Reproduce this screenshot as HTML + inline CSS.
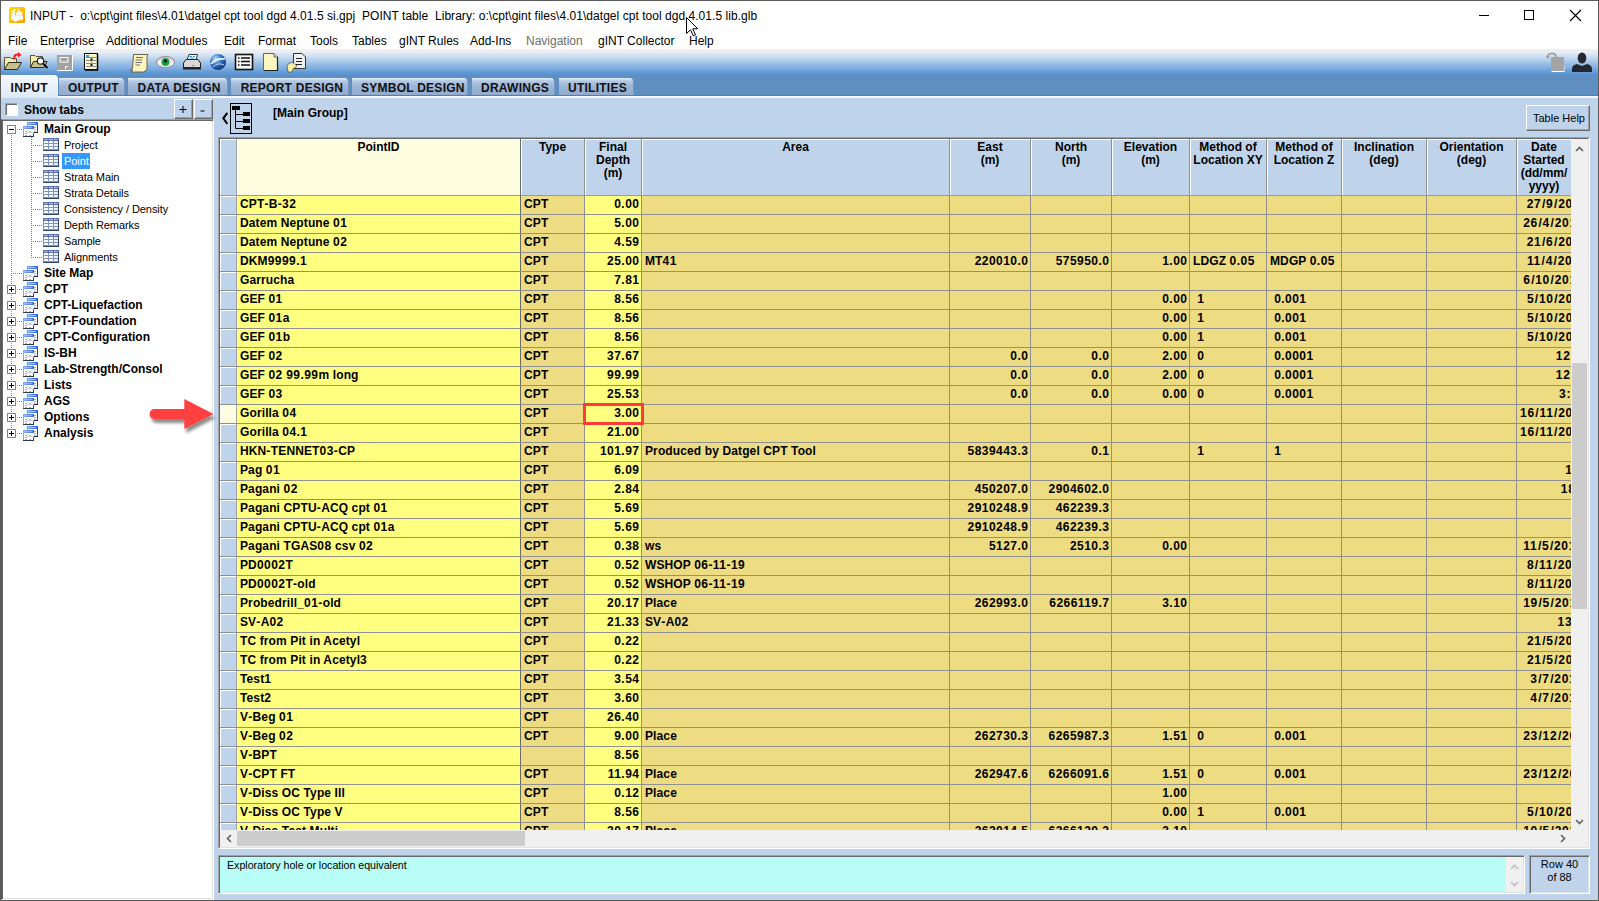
<!DOCTYPE html><html><head><meta charset="utf-8"><style>
*{box-sizing:border-box;margin:0;padding:0}
html,body{width:1599px;height:901px;overflow:hidden;background:#fff}
body{position:relative;font-family:"Liberation Sans",sans-serif;color:#000}
.ab{position:absolute}
.t{position:absolute;white-space:pre;line-height:1}
.b{font-weight:bold}
</style></head><body>
<div class="ab" style="left:0;top:0;width:1599px;height:901px;border:1px solid #5a5a5a;border-right-width:1px"></div>
<svg class="ab" style="left:9px;top:7px" width="17" height="17" viewBox="0 0 17 17">
<defs><linearGradient id="ig" x1="0" y1="0" x2="1" y2="1"><stop offset="0" stop-color="#ffe000"/><stop offset="1" stop-color="#ff9a00"/></linearGradient></defs>
<rect x="0" y="0" width="16" height="16" rx="1.5" fill="url(#ig)"/>
<path d="M2 8.5 H14 V12.5 L9 13.5 L6.5 15 L4.5 13.5 L2 12.5 Z" fill="#fff"/><rect x="2" y="4" width="3" height="1.5" fill="#fff"/><rect x="2" y="6.5" width="3" height="1.5" fill="#fff"/><path d="M4.5 2.2 H6.8 L6 4 V9 H4 V4 Z" fill="#fff" opacity="0.95"/><path d="M9.5 1.5 L10.8 3.5 V6 H8.8 V3.5 Z" fill="#fff" opacity="0.95"/><path d="M7 5.5 L13.5 4.5 V8.5 H7 Z" fill="#fff" opacity="0.85"/>
</svg>
<div class="t" style="left:30px;top:10px;font-size:12px;letter-spacing:.04px">INPUT -  o:\cpt\gint files\4.01\datgel cpt tool dgd 4.01.5 si.gpj  POINT table  Library: o:\cpt\gint files\4.01\datgel cpt tool dgd 4.01.5 lib.glb</div>
<div class="ab" style="left:1479px;top:15px;width:10px;height:1px;background:#000"></div>
<div class="ab" style="left:1524px;top:10px;width:10px;height:10px;border:1px solid #000"></div>
<svg class="ab" style="left:1569px;top:9px" width="13" height="13" viewBox="0 0 13 13"><path d="M1 1 L12 12 M12 1 L1 12" stroke="#000" stroke-width="1.1"/></svg>
<div class="t" style="left:8px;top:35px;font-size:12px;color:#000">File</div>
<div class="t" style="left:40px;top:35px;font-size:12px;color:#000">Enterprise</div>
<div class="t" style="left:106px;top:35px;font-size:12px;color:#000">Additional Modules</div>
<div class="t" style="left:224px;top:35px;font-size:12px;color:#000">Edit</div>
<div class="t" style="left:258px;top:35px;font-size:12px;color:#000">Format</div>
<div class="t" style="left:310px;top:35px;font-size:12px;color:#000">Tools</div>
<div class="t" style="left:352px;top:35px;font-size:12px;color:#000">Tables</div>
<div class="t" style="left:399px;top:35px;font-size:12px;color:#000">gINT Rules</div>
<div class="t" style="left:470px;top:35px;font-size:12px;color:#000">Add-Ins</div>
<div class="t" style="left:526px;top:35px;font-size:12px;color:#6d6d6d">Navigation</div>
<div class="t" style="left:598px;top:35px;font-size:12px;color:#000">gINT Collector</div>
<div class="t" style="left:689px;top:35px;font-size:12px;color:#000">Help</div>
<div class="ab" style="left:1px;top:49px;width:1597px;height:26px;background:linear-gradient(#efefef 0px,#efefef 2px,#eaf1fa 2px,#d0e0f2 7px,#a6c6e8 13px,#80afe0 19px,#5e97d4 24px,#5b93d0 26px)"></div>
<div class="ab" style="left:1px;top:75px;width:1597px;height:21px;background:#5f8ec0"></div>
<div class="ab" style="left:1px;top:95px;width:1597px;height:1px;background:#5d7aa0"></div>
<div class="ab" style="left:1px;top:96px;width:1597px;height:2px;background:#f4f8fc"></div>
<div class="ab" style="left:1px;top:75px;width:57px;height:23px;background:linear-gradient(#f8fbfe,#dde9f5);border-top-right-radius:4px"></div>
<div class="t b" style="left:10.6px;top:82px;font-size:12px;color:#111;letter-spacing:.25px">INPUT</div>
<div class="ab" style="left:59px;top:78px;width:66px;height:17px;background:linear-gradient(#e6eff9 0px,#b4c8e2 3px,#9eb6d6 8px,#92accf 17px);border-right:1px solid #7896bf;border-top-right-radius:4px"></div>
<div class="t b" style="left:68px;top:82px;font-size:12px;color:#111;letter-spacing:.25px">OUTPUT</div>
<div class="ab" style="left:128px;top:78px;width:100px;height:17px;background:linear-gradient(#e6eff9 0px,#b4c8e2 3px,#9eb6d6 8px,#92accf 17px);border-right:1px solid #7896bf;border-top-right-radius:4px"></div>
<div class="t b" style="left:137.5px;top:82px;font-size:12px;color:#111;letter-spacing:.25px">DATA DESIGN</div>
<div class="ab" style="left:231px;top:78px;width:118px;height:17px;background:linear-gradient(#e6eff9 0px,#b4c8e2 3px,#9eb6d6 8px,#92accf 17px);border-right:1px solid #7896bf;border-top-right-radius:4px"></div>
<div class="t b" style="left:240.7px;top:82px;font-size:12px;color:#111;letter-spacing:.25px">REPORT DESIGN</div>
<div class="ab" style="left:352px;top:78px;width:116px;height:17px;background:linear-gradient(#e6eff9 0px,#b4c8e2 3px,#9eb6d6 8px,#92accf 17px);border-right:1px solid #7896bf;border-top-right-radius:4px"></div>
<div class="t b" style="left:361px;top:82px;font-size:12px;color:#111;letter-spacing:.25px">SYMBOL DESIGN</div>
<div class="ab" style="left:472px;top:78px;width:83px;height:17px;background:linear-gradient(#e6eff9 0px,#b4c8e2 3px,#9eb6d6 8px,#92accf 17px);border-right:1px solid #7896bf;border-top-right-radius:4px"></div>
<div class="t b" style="left:481px;top:82px;font-size:12px;color:#111;letter-spacing:.25px">DRAWINGS</div>
<div class="ab" style="left:559px;top:78px;width:75px;height:17px;background:linear-gradient(#e6eff9 0px,#b4c8e2 3px,#9eb6d6 8px,#92accf 17px);border-right:1px solid #7896bf;border-top-right-radius:4px"></div>
<div class="t b" style="left:568px;top:82px;font-size:12px;color:#111;letter-spacing:.25px">UTILITIES</div>
<div class="ab" style="left:1px;top:98px;width:1597px;height:802px;background:#bfd4eb"></div>
<div class="ab" style="left:5px;top:103px;width:13px;height:13px;background:#fff;border-top:1px solid #a0a0a0;border-left:1px solid #a0a0a0;border-right:1px solid #fff;border-bottom:1px solid #fff;box-shadow:inset 1px 1px 0 #696969"></div>
<div class="t b" style="left:24px;top:104px;font-size:12px">Show tabs</div>
<div class="ab" style="left:174px;top:99px;width:19px;height:20px;background:#bfd4eb;border-top:1px solid #fff;border-left:1px solid #fff;border-right:1px solid #696969;border-bottom:1px solid #696969;box-shadow:inset -1px -1px 0 #a0a0a0"></div>
<div class="ab" style="left:194px;top:99px;width:19px;height:20px;background:#bfd4eb;border-top:1px solid #fff;border-left:1px solid #fff;border-right:1px solid #696969;border-bottom:1px solid #696969;box-shadow:inset -1px -1px 0 #a0a0a0"></div>
<svg class="ab" style="left:174px;top:99px" width="40" height="20"><path d="M5.5 10.5 H12.5 M9 7 V14" stroke="#000" stroke-width="1"/><path d="M26.5 12 H30.5" stroke="#000" stroke-width="1"/></svg>
<div class="ab" style="left:1px;top:119px;width:213px;height:781px;background:#fff;border-top:1px solid #a0a0a0;border-left:1px solid #555;border-right:1px solid #fff;border-bottom:1px solid #fff;box-shadow:inset 1px 1px 0 #696969,inset -1px -1px 0 #e3e3e3"></div>
<svg class="ab" style="left:0;top:49px" width="320" height="26" viewBox="0 49 320 26">
<!-- open folder -->
<path d="M4.5 57.5 H10 L11 58.5 H16.5 V69.5 H4.5 Z" fill="#f4eeb0" stroke="#5a5638" stroke-width="1"/>
<path d="M4.5 69.5 L8.5 62.5 H21.5 L17.5 69.5 Z" fill="#c8c08a" stroke="#2a2a20" stroke-width="1"/>
<path d="M14 59.5 C14 55 16 54 19 54.5" stroke="#ff1a1a" stroke-width="2" fill="none"/>
<path d="M18 52 L21.5 55 L18 57.5 Z" fill="#ff1a1a"/>
<!-- folder search -->
<path d="M30.5 55.5 H35 L36 56.5 H42.5 V67.5 H30.5 Z" fill="#f4eeb0" stroke="#5a5638" stroke-width="1"/>
<path d="M30.5 67.5 L33.5 61.5 H47 L44 67.5 Z" fill="#c8c08a" stroke="#2a2a20" stroke-width="1"/>
<circle cx="40.5" cy="61" r="3.2" fill="#fff" stroke="#222" stroke-width="1.2"/>
<path d="M43 63.5 L47.5 68" stroke="#111" stroke-width="1.8"/>
<!-- floppy -->
<rect x="57" y="55" width="15" height="15" fill="#a2a2a2"/>
<path d="M57 70.5 H72.5 V55" stroke="#fff" stroke-width="1" fill="none"/>
<rect x="60" y="57.5" width="8" height="4.5" fill="#a2a2a2" stroke="#fff" stroke-width="1"/>
<path d="M65.5 69 V66.5 H68" stroke="#fff" stroke-width="1" fill="none"/>
<!-- doc lines -->
<rect x="84.5" y="53.5" width="13" height="16" fill="#fffac8" stroke="#111" stroke-width="1"/>
<path d="M97.5 54 V70 H85" stroke="#000" stroke-width="1.5" fill="none"/>
<rect x="86" y="55" width="3" height="2" fill="#2aa0f0"/>
<path d="M86 57.5 H96 M86 60.5 H96 M86 63.5 H96 M86 66.5 H96" stroke="#8a8a8a" stroke-width="1"/>
<path d="M91.5 58 V67" stroke="#999" stroke-width="1"/>
<rect x="90.5" y="58.5" width="2" height="2" fill="#111"/><rect x="90.5" y="64" width="2" height="2" fill="#111"/>
<!-- scroll -->
<path d="M133.5 54.5 H148 L147 56 V69 L144 72 H131 L133 70 H130 L132.5 68.5 Z" fill="#fcf5c0" stroke="#6a6448" stroke-width="1"/>
<path d="M136 57.5 H143 M135.5 60 H142 M135.5 62.5 H142 M135.5 65 H140" stroke="#707070" stroke-width="1"/>
<!-- eye -->
<ellipse cx="165.5" cy="62" rx="9" ry="5.5" fill="#f4f4f4" stroke="#8a8a8a" stroke-width="1"/>
<path d="M157 61 Q165.5 54 174 61" stroke="#d8a0c8" stroke-width="1" fill="none"/>
<circle cx="165.5" cy="62" r="4" fill="#18a040"/>
<circle cx="165.5" cy="61" r="1.6" fill="#111"/>
<!-- printer -->
<path d="M187 60 L189 54.5 H197.5 L196 60 Z" fill="#fff" stroke="#333" stroke-width="1"/>
<path d="M189.5 56.5 H192 M193 56.5 H195 M190 58 H194" stroke="#1aa0ff" stroke-width="1"/>
<path d="M183.5 63 L186 59.5 H198 L200.5 63 V67.5 H183.5 Z" fill="#d8d8d8" stroke="#222" stroke-width="1"/>
<rect x="183" y="67" width="18" height="2.5" fill="#222"/>
<rect x="192" y="65" width="2" height="1" fill="#20d020"/>
<!-- globe -->
<defs><radialGradient id="gl" cx="0.35" cy="0.3" r="0.8"><stop offset="0" stop-color="#b8dcff"/><stop offset="0.5" stop-color="#2a70c0"/><stop offset="1" stop-color="#0a2a70"/></radialGradient></defs>
<circle cx="218" cy="62" r="8" fill="url(#gl)"/>
<path d="M211 64 Q216 58 225 59" stroke="#fff" stroke-width="1.6" fill="none" opacity="0.9"/>
<path d="M213 67 Q218 62 224 65" stroke="#e8f4ff" stroke-width="1" fill="none" opacity="0.8"/>
<!-- list box -->
<rect x="235.5" y="54.5" width="17" height="15" fill="#f8f8f8" stroke="#111" stroke-width="1.6"/>
<path d="M238 58 H239.5 M241 58 H250 M238 61.5 H239.5 M241 61.5 H250 M238 65 H239.5 M241 65 H250" stroke="#111" stroke-width="1.4"/>
<!-- blank page -->
<path d="M263.5 53.5 H274 L277.5 57 V70.5 H263.5 Z" fill="#fbf6c0" stroke="#666" stroke-width="1"/>
<path d="M274 53.5 V57 H277.5" fill="#ddd" stroke="#666" stroke-width="1"/>
<path d="M277.5 57 V70.5 H264" stroke="#222" stroke-width="1.2" fill="none"/>
<!-- hand doc -->
<path d="M293.5 53.5 H302 L305.5 57 V68.5 H293.5 Z" fill="#f0f0f0" stroke="#333" stroke-width="1"/>
<path d="M296 58.5 H302 M296 61.5 H302 M296 64.5 H302" stroke="#222" stroke-width="1"/>
<path d="M287 66 L289 63 L293 62.5 L297 66 L293 69 L292 72 H288 Z" fill="#f8f0a0" stroke="#555" stroke-width="0.8"/>
<!-- right icons -->
</svg>
<svg class="ab" style="left:1540px;top:49px" width="58" height="26" viewBox="1540 49 58 26">
<rect x="1551.5" y="66" width="13" height="6" fill="#fff"/>
<rect x="1551" y="57" width="13" height="14" fill="#a4a4a4"/>
<path d="M1547 58 Q1548 53 1553 53.5 Q1556 54 1556 57" stroke="#a4a4a4" stroke-width="1.8" fill="none"/>
<path d="M1546 56 L1548 59 L1550 56 Z" fill="#a4a4a4"/>
<ellipse cx="1582" cy="58" rx="4.3" ry="5.5" fill="#24282e"/>
<path d="M1572 72 V69 Q1572 65 1577 64 L1582 66 L1587 64 Q1592 65 1592 69 V72 Z" fill="#24282e"/>
</svg>
<svg width="0" height="0" style="position:absolute"><defs>
<symbol id="tbl" viewBox="0 0 16 13">
<rect x="0" y="0" width="16" height="13" fill="#8193c0"/>
<rect x="0" y="0" width="16" height="3" fill="#5c74b0"/>
<rect x="1.5" y="1" width="3" height="1" fill="#a8bce8"/><rect x="6" y="1" width="4" height="1" fill="#a8bce8"/><rect x="11" y="1" width="3" height="1" fill="#a8bce8"/>
<rect x="1" y="3" width="4" height="2" fill="#fff"/><rect x="6" y="3" width="4" height="2" fill="#fff"/><rect x="11" y="3" width="4" height="2" fill="#e8f0ff"/>
<rect x="1" y="6" width="4" height="2" fill="#fff"/><rect x="6" y="6" width="4" height="2" fill="#fff"/><rect x="11" y="6" width="4" height="2" fill="#e8f0ff"/>
<rect x="1" y="9" width="4" height="2" fill="#fff"/><rect x="6" y="9" width="4" height="2" fill="#fff"/><rect x="11" y="9" width="4" height="2" fill="#e8f0ff"/>
<rect x="0" y="12" width="16" height="1" fill="#34446c"/><rect x="15" y="2" width="1" height="11" fill="#34446c"/>
</symbol>
<symbol id="grp" viewBox="0 0 16 15">
<linearGradient id="tb" x1="0" y1="0" x2="1" y2="0"><stop offset="0" stop-color="#7aa6f4"/><stop offset="1" stop-color="#2c62dc"/></linearGradient>
<rect x="4" y="0" width="11" height="11" fill="#fff"/>
<rect x="4" y="0" width="11" height="3" fill="url(#tb)"/><rect x="5" y="1" width="8" height="1" fill="#a8c8fc" opacity="0.8"/>
<path d="M10 5.5 H13 M10 7.5 H13 M10 9.5 H13" stroke="#a4b0c8" stroke-width="1"/>
<rect x="4" y="3" width="1" height="8" fill="#8894b0"/><rect x="14" y="3" width="1" height="8" fill="#34446a"/><rect x="4" y="10" width="11" height="1" fill="#2a3858"/>
<rect x="0" y="4" width="11" height="11" fill="#fff" opacity="0.8"/>
<rect x="0" y="4" width="11" height="3" fill="url(#tb)" opacity="0.92"/><rect x="1" y="5" width="8" height="1" fill="#a8c8fc" opacity="0.7"/>
<path d="M2 9.5 H4 M6 9.5 H8 M2 11.5 H4 M2 13.5 H4 M6 13.5 H8" stroke="#a4b0c8" stroke-width="1"/>
<rect x="0" y="7" width="1" height="8" fill="#98a4bc"/><rect x="10" y="11" width="1" height="4" fill="#3c4c6c"/><rect x="0" y="14" width="11" height="1" fill="#2a3858"/>
</symbol>
</defs></svg>
<svg class="ab" style="left:0;top:0" width="214" height="460" viewBox="0 0 214 460"><rect x="11" y="135" width="1" height="1" fill="#808080"/><rect x="11" y="137" width="1" height="1" fill="#808080"/><rect x="11" y="139" width="1" height="1" fill="#808080"/><rect x="11" y="141" width="1" height="1" fill="#808080"/><rect x="11" y="143" width="1" height="1" fill="#808080"/><rect x="11" y="145" width="1" height="1" fill="#808080"/><rect x="11" y="147" width="1" height="1" fill="#808080"/><rect x="11" y="149" width="1" height="1" fill="#808080"/><rect x="11" y="151" width="1" height="1" fill="#808080"/><rect x="11" y="153" width="1" height="1" fill="#808080"/><rect x="11" y="155" width="1" height="1" fill="#808080"/><rect x="11" y="157" width="1" height="1" fill="#808080"/><rect x="11" y="159" width="1" height="1" fill="#808080"/><rect x="11" y="161" width="1" height="1" fill="#808080"/><rect x="11" y="163" width="1" height="1" fill="#808080"/><rect x="11" y="165" width="1" height="1" fill="#808080"/><rect x="11" y="167" width="1" height="1" fill="#808080"/><rect x="11" y="169" width="1" height="1" fill="#808080"/><rect x="11" y="171" width="1" height="1" fill="#808080"/><rect x="11" y="173" width="1" height="1" fill="#808080"/><rect x="11" y="175" width="1" height="1" fill="#808080"/><rect x="11" y="177" width="1" height="1" fill="#808080"/><rect x="11" y="179" width="1" height="1" fill="#808080"/><rect x="11" y="181" width="1" height="1" fill="#808080"/><rect x="11" y="183" width="1" height="1" fill="#808080"/><rect x="11" y="185" width="1" height="1" fill="#808080"/><rect x="11" y="187" width="1" height="1" fill="#808080"/><rect x="11" y="189" width="1" height="1" fill="#808080"/><rect x="11" y="191" width="1" height="1" fill="#808080"/><rect x="11" y="193" width="1" height="1" fill="#808080"/><rect x="11" y="195" width="1" height="1" fill="#808080"/><rect x="11" y="197" width="1" height="1" fill="#808080"/><rect x="11" y="199" width="1" height="1" fill="#808080"/><rect x="11" y="201" width="1" height="1" fill="#808080"/><rect x="11" y="203" width="1" height="1" fill="#808080"/><rect x="11" y="205" width="1" height="1" fill="#808080"/><rect x="11" y="207" width="1" height="1" fill="#808080"/><rect x="11" y="209" width="1" height="1" fill="#808080"/><rect x="11" y="211" width="1" height="1" fill="#808080"/><rect x="11" y="213" width="1" height="1" fill="#808080"/><rect x="11" y="215" width="1" height="1" fill="#808080"/><rect x="11" y="217" width="1" height="1" fill="#808080"/><rect x="11" y="219" width="1" height="1" fill="#808080"/><rect x="11" y="221" width="1" height="1" fill="#808080"/><rect x="11" y="223" width="1" height="1" fill="#808080"/><rect x="11" y="225" width="1" height="1" fill="#808080"/><rect x="11" y="227" width="1" height="1" fill="#808080"/><rect x="11" y="229" width="1" height="1" fill="#808080"/><rect x="11" y="231" width="1" height="1" fill="#808080"/><rect x="11" y="233" width="1" height="1" fill="#808080"/><rect x="11" y="235" width="1" height="1" fill="#808080"/><rect x="11" y="237" width="1" height="1" fill="#808080"/><rect x="11" y="239" width="1" height="1" fill="#808080"/><rect x="11" y="241" width="1" height="1" fill="#808080"/><rect x="11" y="243" width="1" height="1" fill="#808080"/><rect x="11" y="245" width="1" height="1" fill="#808080"/><rect x="11" y="247" width="1" height="1" fill="#808080"/><rect x="11" y="249" width="1" height="1" fill="#808080"/><rect x="11" y="251" width="1" height="1" fill="#808080"/><rect x="11" y="253" width="1" height="1" fill="#808080"/><rect x="11" y="255" width="1" height="1" fill="#808080"/><rect x="11" y="257" width="1" height="1" fill="#808080"/><rect x="11" y="259" width="1" height="1" fill="#808080"/><rect x="11" y="261" width="1" height="1" fill="#808080"/><rect x="11" y="263" width="1" height="1" fill="#808080"/><rect x="11" y="265" width="1" height="1" fill="#808080"/><rect x="11" y="267" width="1" height="1" fill="#808080"/><rect x="11" y="269" width="1" height="1" fill="#808080"/><rect x="11" y="271" width="1" height="1" fill="#808080"/><rect x="11" y="273" width="1" height="1" fill="#808080"/><rect x="11" y="275" width="1" height="1" fill="#808080"/><rect x="11" y="277" width="1" height="1" fill="#808080"/><rect x="11" y="279" width="1" height="1" fill="#808080"/><rect x="11" y="281" width="1" height="1" fill="#808080"/><rect x="11" y="283" width="1" height="1" fill="#808080"/><rect x="11" y="285" width="1" height="1" fill="#808080"/><rect x="11" y="287" width="1" height="1" fill="#808080"/><rect x="11" y="289" width="1" height="1" fill="#808080"/><rect x="11" y="291" width="1" height="1" fill="#808080"/><rect x="11" y="293" width="1" height="1" fill="#808080"/><rect x="11" y="295" width="1" height="1" fill="#808080"/><rect x="11" y="297" width="1" height="1" fill="#808080"/><rect x="11" y="299" width="1" height="1" fill="#808080"/><rect x="11" y="301" width="1" height="1" fill="#808080"/><rect x="11" y="303" width="1" height="1" fill="#808080"/><rect x="11" y="305" width="1" height="1" fill="#808080"/><rect x="11" y="307" width="1" height="1" fill="#808080"/><rect x="11" y="309" width="1" height="1" fill="#808080"/><rect x="11" y="311" width="1" height="1" fill="#808080"/><rect x="11" y="313" width="1" height="1" fill="#808080"/><rect x="11" y="315" width="1" height="1" fill="#808080"/><rect x="11" y="317" width="1" height="1" fill="#808080"/><rect x="11" y="319" width="1" height="1" fill="#808080"/><rect x="11" y="321" width="1" height="1" fill="#808080"/><rect x="11" y="323" width="1" height="1" fill="#808080"/><rect x="11" y="325" width="1" height="1" fill="#808080"/><rect x="11" y="327" width="1" height="1" fill="#808080"/><rect x="11" y="329" width="1" height="1" fill="#808080"/><rect x="11" y="331" width="1" height="1" fill="#808080"/><rect x="11" y="333" width="1" height="1" fill="#808080"/><rect x="11" y="335" width="1" height="1" fill="#808080"/><rect x="11" y="337" width="1" height="1" fill="#808080"/><rect x="11" y="339" width="1" height="1" fill="#808080"/><rect x="11" y="341" width="1" height="1" fill="#808080"/><rect x="11" y="343" width="1" height="1" fill="#808080"/><rect x="11" y="345" width="1" height="1" fill="#808080"/><rect x="11" y="347" width="1" height="1" fill="#808080"/><rect x="11" y="349" width="1" height="1" fill="#808080"/><rect x="11" y="351" width="1" height="1" fill="#808080"/><rect x="11" y="353" width="1" height="1" fill="#808080"/><rect x="11" y="355" width="1" height="1" fill="#808080"/><rect x="11" y="357" width="1" height="1" fill="#808080"/><rect x="11" y="359" width="1" height="1" fill="#808080"/><rect x="11" y="361" width="1" height="1" fill="#808080"/><rect x="11" y="363" width="1" height="1" fill="#808080"/><rect x="11" y="365" width="1" height="1" fill="#808080"/><rect x="11" y="367" width="1" height="1" fill="#808080"/><rect x="11" y="369" width="1" height="1" fill="#808080"/><rect x="11" y="371" width="1" height="1" fill="#808080"/><rect x="11" y="373" width="1" height="1" fill="#808080"/><rect x="11" y="375" width="1" height="1" fill="#808080"/><rect x="11" y="377" width="1" height="1" fill="#808080"/><rect x="11" y="379" width="1" height="1" fill="#808080"/><rect x="11" y="381" width="1" height="1" fill="#808080"/><rect x="11" y="383" width="1" height="1" fill="#808080"/><rect x="11" y="385" width="1" height="1" fill="#808080"/><rect x="11" y="387" width="1" height="1" fill="#808080"/><rect x="11" y="389" width="1" height="1" fill="#808080"/><rect x="11" y="391" width="1" height="1" fill="#808080"/><rect x="11" y="393" width="1" height="1" fill="#808080"/><rect x="11" y="395" width="1" height="1" fill="#808080"/><rect x="11" y="397" width="1" height="1" fill="#808080"/><rect x="11" y="399" width="1" height="1" fill="#808080"/><rect x="11" y="401" width="1" height="1" fill="#808080"/><rect x="11" y="403" width="1" height="1" fill="#808080"/><rect x="11" y="405" width="1" height="1" fill="#808080"/><rect x="11" y="407" width="1" height="1" fill="#808080"/><rect x="11" y="409" width="1" height="1" fill="#808080"/><rect x="11" y="411" width="1" height="1" fill="#808080"/><rect x="11" y="413" width="1" height="1" fill="#808080"/><rect x="11" y="415" width="1" height="1" fill="#808080"/><rect x="11" y="417" width="1" height="1" fill="#808080"/><rect x="11" y="419" width="1" height="1" fill="#808080"/><rect x="11" y="421" width="1" height="1" fill="#808080"/><rect x="11" y="423" width="1" height="1" fill="#808080"/><rect x="11" y="425" width="1" height="1" fill="#808080"/><rect x="11" y="427" width="1" height="1" fill="#808080"/><rect x="11" y="429" width="1" height="1" fill="#808080"/><rect x="11" y="431" width="1" height="1" fill="#808080"/><rect x="31" y="137" width="1" height="1" fill="#808080"/><rect x="31" y="139" width="1" height="1" fill="#808080"/><rect x="31" y="141" width="1" height="1" fill="#808080"/><rect x="31" y="143" width="1" height="1" fill="#808080"/><rect x="31" y="145" width="1" height="1" fill="#808080"/><rect x="31" y="147" width="1" height="1" fill="#808080"/><rect x="31" y="149" width="1" height="1" fill="#808080"/><rect x="31" y="151" width="1" height="1" fill="#808080"/><rect x="31" y="153" width="1" height="1" fill="#808080"/><rect x="31" y="155" width="1" height="1" fill="#808080"/><rect x="31" y="157" width="1" height="1" fill="#808080"/><rect x="31" y="159" width="1" height="1" fill="#808080"/><rect x="31" y="161" width="1" height="1" fill="#808080"/><rect x="31" y="163" width="1" height="1" fill="#808080"/><rect x="31" y="165" width="1" height="1" fill="#808080"/><rect x="31" y="167" width="1" height="1" fill="#808080"/><rect x="31" y="169" width="1" height="1" fill="#808080"/><rect x="31" y="171" width="1" height="1" fill="#808080"/><rect x="31" y="173" width="1" height="1" fill="#808080"/><rect x="31" y="175" width="1" height="1" fill="#808080"/><rect x="31" y="177" width="1" height="1" fill="#808080"/><rect x="31" y="179" width="1" height="1" fill="#808080"/><rect x="31" y="181" width="1" height="1" fill="#808080"/><rect x="31" y="183" width="1" height="1" fill="#808080"/><rect x="31" y="185" width="1" height="1" fill="#808080"/><rect x="31" y="187" width="1" height="1" fill="#808080"/><rect x="31" y="189" width="1" height="1" fill="#808080"/><rect x="31" y="191" width="1" height="1" fill="#808080"/><rect x="31" y="193" width="1" height="1" fill="#808080"/><rect x="31" y="195" width="1" height="1" fill="#808080"/><rect x="31" y="197" width="1" height="1" fill="#808080"/><rect x="31" y="199" width="1" height="1" fill="#808080"/><rect x="31" y="201" width="1" height="1" fill="#808080"/><rect x="31" y="203" width="1" height="1" fill="#808080"/><rect x="31" y="205" width="1" height="1" fill="#808080"/><rect x="31" y="207" width="1" height="1" fill="#808080"/><rect x="31" y="209" width="1" height="1" fill="#808080"/><rect x="31" y="211" width="1" height="1" fill="#808080"/><rect x="31" y="213" width="1" height="1" fill="#808080"/><rect x="31" y="215" width="1" height="1" fill="#808080"/><rect x="31" y="217" width="1" height="1" fill="#808080"/><rect x="31" y="219" width="1" height="1" fill="#808080"/><rect x="31" y="221" width="1" height="1" fill="#808080"/><rect x="31" y="223" width="1" height="1" fill="#808080"/><rect x="31" y="225" width="1" height="1" fill="#808080"/><rect x="31" y="227" width="1" height="1" fill="#808080"/><rect x="31" y="229" width="1" height="1" fill="#808080"/><rect x="31" y="231" width="1" height="1" fill="#808080"/><rect x="31" y="233" width="1" height="1" fill="#808080"/><rect x="31" y="235" width="1" height="1" fill="#808080"/><rect x="31" y="237" width="1" height="1" fill="#808080"/><rect x="31" y="239" width="1" height="1" fill="#808080"/><rect x="31" y="241" width="1" height="1" fill="#808080"/><rect x="31" y="243" width="1" height="1" fill="#808080"/><rect x="31" y="245" width="1" height="1" fill="#808080"/><rect x="31" y="247" width="1" height="1" fill="#808080"/><rect x="31" y="249" width="1" height="1" fill="#808080"/><rect x="31" y="251" width="1" height="1" fill="#808080"/><rect x="31" y="253" width="1" height="1" fill="#808080"/><rect x="31" y="255" width="1" height="1" fill="#808080"/><rect x="31" y="257" width="1" height="1" fill="#808080"/><rect x="7.5" y="125.5" width="8" height="8" fill="#fff" stroke="#848484" stroke-width="1"/><rect x="9" y="129" width="5" height="1" fill="#000"/><rect x="17" y="129" width="1" height="1" fill="#808080"/><rect x="19" y="129" width="1" height="1" fill="#808080"/><rect x="21" y="129" width="1" height="1" fill="#808080"/><use href="#grp" x="23" y="122" width="16" height="15"/><rect x="33" y="145" width="1" height="1" fill="#808080"/><rect x="35" y="145" width="1" height="1" fill="#808080"/><rect x="37" y="145" width="1" height="1" fill="#808080"/><rect x="39" y="145" width="1" height="1" fill="#808080"/><rect x="41" y="145" width="1" height="1" fill="#808080"/><use href="#tbl" x="43" y="138" width="16" height="13"/><rect x="33" y="161" width="1" height="1" fill="#808080"/><rect x="35" y="161" width="1" height="1" fill="#808080"/><rect x="37" y="161" width="1" height="1" fill="#808080"/><rect x="39" y="161" width="1" height="1" fill="#808080"/><rect x="41" y="161" width="1" height="1" fill="#808080"/><use href="#tbl" x="43" y="154" width="16" height="13"/><rect x="33" y="177" width="1" height="1" fill="#808080"/><rect x="35" y="177" width="1" height="1" fill="#808080"/><rect x="37" y="177" width="1" height="1" fill="#808080"/><rect x="39" y="177" width="1" height="1" fill="#808080"/><rect x="41" y="177" width="1" height="1" fill="#808080"/><use href="#tbl" x="43" y="170" width="16" height="13"/><rect x="33" y="193" width="1" height="1" fill="#808080"/><rect x="35" y="193" width="1" height="1" fill="#808080"/><rect x="37" y="193" width="1" height="1" fill="#808080"/><rect x="39" y="193" width="1" height="1" fill="#808080"/><rect x="41" y="193" width="1" height="1" fill="#808080"/><use href="#tbl" x="43" y="186" width="16" height="13"/><rect x="33" y="209" width="1" height="1" fill="#808080"/><rect x="35" y="209" width="1" height="1" fill="#808080"/><rect x="37" y="209" width="1" height="1" fill="#808080"/><rect x="39" y="209" width="1" height="1" fill="#808080"/><rect x="41" y="209" width="1" height="1" fill="#808080"/><use href="#tbl" x="43" y="202" width="16" height="13"/><rect x="33" y="225" width="1" height="1" fill="#808080"/><rect x="35" y="225" width="1" height="1" fill="#808080"/><rect x="37" y="225" width="1" height="1" fill="#808080"/><rect x="39" y="225" width="1" height="1" fill="#808080"/><rect x="41" y="225" width="1" height="1" fill="#808080"/><use href="#tbl" x="43" y="218" width="16" height="13"/><rect x="33" y="241" width="1" height="1" fill="#808080"/><rect x="35" y="241" width="1" height="1" fill="#808080"/><rect x="37" y="241" width="1" height="1" fill="#808080"/><rect x="39" y="241" width="1" height="1" fill="#808080"/><rect x="41" y="241" width="1" height="1" fill="#808080"/><use href="#tbl" x="43" y="234" width="16" height="13"/><rect x="33" y="257" width="1" height="1" fill="#808080"/><rect x="35" y="257" width="1" height="1" fill="#808080"/><rect x="37" y="257" width="1" height="1" fill="#808080"/><rect x="39" y="257" width="1" height="1" fill="#808080"/><rect x="41" y="257" width="1" height="1" fill="#808080"/><use href="#tbl" x="43" y="250" width="16" height="13"/><rect x="13" y="273" width="1" height="1" fill="#808080"/><rect x="15" y="273" width="1" height="1" fill="#808080"/><rect x="17" y="273" width="1" height="1" fill="#808080"/><rect x="19" y="273" width="1" height="1" fill="#808080"/><rect x="21" y="273" width="1" height="1" fill="#808080"/><use href="#grp" x="23" y="266" width="16" height="15"/><rect x="7.5" y="285.5" width="8" height="8" fill="#fff" stroke="#848484" stroke-width="1"/><rect x="9" y="289" width="5" height="1" fill="#000"/><rect x="11" y="287" width="1" height="5" fill="#000"/><rect x="17" y="289" width="1" height="1" fill="#808080"/><rect x="19" y="289" width="1" height="1" fill="#808080"/><rect x="21" y="289" width="1" height="1" fill="#808080"/><use href="#grp" x="23" y="282" width="16" height="15"/><rect x="7.5" y="301.5" width="8" height="8" fill="#fff" stroke="#848484" stroke-width="1"/><rect x="9" y="305" width="5" height="1" fill="#000"/><rect x="11" y="303" width="1" height="5" fill="#000"/><rect x="17" y="305" width="1" height="1" fill="#808080"/><rect x="19" y="305" width="1" height="1" fill="#808080"/><rect x="21" y="305" width="1" height="1" fill="#808080"/><use href="#grp" x="23" y="298" width="16" height="15"/><rect x="7.5" y="317.5" width="8" height="8" fill="#fff" stroke="#848484" stroke-width="1"/><rect x="9" y="321" width="5" height="1" fill="#000"/><rect x="11" y="319" width="1" height="5" fill="#000"/><rect x="17" y="321" width="1" height="1" fill="#808080"/><rect x="19" y="321" width="1" height="1" fill="#808080"/><rect x="21" y="321" width="1" height="1" fill="#808080"/><use href="#grp" x="23" y="314" width="16" height="15"/><rect x="7.5" y="333.5" width="8" height="8" fill="#fff" stroke="#848484" stroke-width="1"/><rect x="9" y="337" width="5" height="1" fill="#000"/><rect x="11" y="335" width="1" height="5" fill="#000"/><rect x="17" y="337" width="1" height="1" fill="#808080"/><rect x="19" y="337" width="1" height="1" fill="#808080"/><rect x="21" y="337" width="1" height="1" fill="#808080"/><use href="#grp" x="23" y="330" width="16" height="15"/><rect x="7.5" y="349.5" width="8" height="8" fill="#fff" stroke="#848484" stroke-width="1"/><rect x="9" y="353" width="5" height="1" fill="#000"/><rect x="11" y="351" width="1" height="5" fill="#000"/><rect x="17" y="353" width="1" height="1" fill="#808080"/><rect x="19" y="353" width="1" height="1" fill="#808080"/><rect x="21" y="353" width="1" height="1" fill="#808080"/><use href="#grp" x="23" y="346" width="16" height="15"/><rect x="7.5" y="365.5" width="8" height="8" fill="#fff" stroke="#848484" stroke-width="1"/><rect x="9" y="369" width="5" height="1" fill="#000"/><rect x="11" y="367" width="1" height="5" fill="#000"/><rect x="17" y="369" width="1" height="1" fill="#808080"/><rect x="19" y="369" width="1" height="1" fill="#808080"/><rect x="21" y="369" width="1" height="1" fill="#808080"/><use href="#grp" x="23" y="362" width="16" height="15"/><rect x="7.5" y="381.5" width="8" height="8" fill="#fff" stroke="#848484" stroke-width="1"/><rect x="9" y="385" width="5" height="1" fill="#000"/><rect x="11" y="383" width="1" height="5" fill="#000"/><rect x="17" y="385" width="1" height="1" fill="#808080"/><rect x="19" y="385" width="1" height="1" fill="#808080"/><rect x="21" y="385" width="1" height="1" fill="#808080"/><use href="#grp" x="23" y="378" width="16" height="15"/><rect x="7.5" y="397.5" width="8" height="8" fill="#fff" stroke="#848484" stroke-width="1"/><rect x="9" y="401" width="5" height="1" fill="#000"/><rect x="11" y="399" width="1" height="5" fill="#000"/><rect x="17" y="401" width="1" height="1" fill="#808080"/><rect x="19" y="401" width="1" height="1" fill="#808080"/><rect x="21" y="401" width="1" height="1" fill="#808080"/><use href="#grp" x="23" y="394" width="16" height="15"/><rect x="7.5" y="413.5" width="8" height="8" fill="#fff" stroke="#848484" stroke-width="1"/><rect x="9" y="417" width="5" height="1" fill="#000"/><rect x="11" y="415" width="1" height="5" fill="#000"/><rect x="17" y="417" width="1" height="1" fill="#808080"/><rect x="19" y="417" width="1" height="1" fill="#808080"/><rect x="21" y="417" width="1" height="1" fill="#808080"/><use href="#grp" x="23" y="410" width="16" height="15"/><rect x="7.5" y="429.5" width="8" height="8" fill="#fff" stroke="#848484" stroke-width="1"/><rect x="9" y="433" width="5" height="1" fill="#000"/><rect x="11" y="431" width="1" height="5" fill="#000"/><rect x="17" y="433" width="1" height="1" fill="#808080"/><rect x="19" y="433" width="1" height="1" fill="#808080"/><rect x="21" y="433" width="1" height="1" fill="#808080"/><use href="#grp" x="23" y="426" width="16" height="15"/></svg>
<div class="ab" style="left:62px;top:153px;width:28px;height:16px;background:#3399ff"></div>
<div class="t b" style="left:44px;top:123px;font-size:12px">Main Group</div>
<div class="t" style="left:64px;top:140px;font-size:11px;color:#000;letter-spacing:-.08px">Project</div>
<div class="t" style="left:64px;top:156px;font-size:11px;color:#fff;letter-spacing:-.08px">Point</div>
<div class="t" style="left:64px;top:172px;font-size:11px;color:#000;letter-spacing:-.08px">Strata Main</div>
<div class="t" style="left:64px;top:188px;font-size:11px;color:#000;letter-spacing:-.08px">Strata Details</div>
<div class="t" style="left:64px;top:204px;font-size:11px;color:#000;letter-spacing:-.08px">Consistency / Density</div>
<div class="t" style="left:64px;top:220px;font-size:11px;color:#000;letter-spacing:-.08px">Depth Remarks</div>
<div class="t" style="left:64px;top:236px;font-size:11px;color:#000;letter-spacing:-.08px">Sample</div>
<div class="t" style="left:64px;top:252px;font-size:11px;color:#000;letter-spacing:-.08px">Alignments</div>
<div class="t b" style="left:44px;top:267px;font-size:12px">Site Map</div>
<div class="t b" style="left:44px;top:283px;font-size:12px">CPT</div>
<div class="t b" style="left:44px;top:299px;font-size:12px">CPT-Liquefaction</div>
<div class="t b" style="left:44px;top:315px;font-size:12px">CPT-Foundation</div>
<div class="t b" style="left:44px;top:331px;font-size:12px">CPT-Configuration</div>
<div class="t b" style="left:44px;top:347px;font-size:12px">IS-BH</div>
<div class="t b" style="left:44px;top:363px;font-size:12px">Lab-Strength/Consol</div>
<div class="t b" style="left:44px;top:379px;font-size:12px">Lists</div>
<div class="t b" style="left:44px;top:395px;font-size:12px">AGS</div>
<div class="t b" style="left:44px;top:411px;font-size:12px">Options</div>
<div class="t b" style="left:44px;top:427px;font-size:12px">Analysis</div>
<svg class="ab" style="left:220px;top:102px" width="34" height="34" viewBox="220 102 34 34"><path d="M227.3 112.8 L223.3 118.3 L227.3 123.8" stroke="#000" stroke-width="2" fill="none"/><rect x="230.5" y="103.5" width="21" height="30" fill="none" stroke="#000" stroke-width="1"/><rect x="232" y="106" width="8" height="4" fill="#000"/><path d="M235.5 110 V128.5 H243 M235.5 114.5 H243 M235.5 121.5 H243" stroke="#000" stroke-width="1" fill="none"/><rect x="243" y="112" width="7" height="4" fill="#000"/><rect x="243" y="119" width="7" height="4" fill="#000"/><rect x="243" y="126" width="7" height="4" fill="#000"/></svg>
<div class="t b" style="left:273px;top:107px;font-size:12px">[Main Group]</div>
<div class="ab" style="left:1526px;top:105px;width:64px;height:26px;background:#bfd4eb;border-top:1px solid #fff;border-left:1px solid #fff;border-right:1px solid #696969;border-bottom:1px solid #696969;box-shadow:inset -1px -1px 0 #a0a0a0"></div>
<div class="t" style="left:1533px;top:113px;font-size:11px">Table Help</div>
<div class="ab" style="left:218px;top:137px;width:1372px;height:712px;border-top:1px solid #a0a0a0;border-left:1px solid #a0a0a0;border-right:1px solid #fff;border-bottom:1px solid #fff"></div>
<div class="ab" style="left:219px;top:138px;width:1370px;height:710px;border-top:1px solid #696969;border-left:1px solid #696969;border-right:1px solid #e3e3e3;border-bottom:1px solid #e3e3e3"></div>
<div class="ab" style="left:220px;top:139px;width:1351px;height:691px;overflow:hidden;background:#eddc82">
<div class="ab" style="left:0px;top:0px;width:16px;height:56px;background:#bfd4eb;border-top:1px solid #fff;border-left:1px solid #fff"></div>
<div class="ab" style="left:0px;top:56px;width:1400px;height:1px;background:#9a9aa2;"></div>
<div class="ab" style="left:17px;top:0px;width:283px;height:56px;background:#fffde0;border-top:1px solid #fff;border-left:1px solid #fff"></div>
<div class="t b" style="left:17px;top:2px;width:283px;text-align:center;font-size:12px;line-height:13px">PointID</div>
<div class="ab" style="left:301px;top:0px;width:63px;height:56px;background:#bfd4eb;border-top:1px solid #fff;border-left:1px solid #fff"></div>
<div class="t b" style="left:301px;top:2px;width:63px;text-align:center;font-size:12px;line-height:13px">Type</div>
<div class="ab" style="left:365px;top:0px;width:56px;height:56px;background:#bfd4eb;border-top:1px solid #fff;border-left:1px solid #fff"></div>
<div class="t b" style="left:365px;top:2px;width:56px;text-align:center;font-size:12px;line-height:13px">Final<br>Depth<br>(m)</div>
<div class="ab" style="left:422px;top:0px;width:307px;height:56px;background:#bfd4eb;border-top:1px solid #fff;border-left:1px solid #fff"></div>
<div class="t b" style="left:422px;top:2px;width:307px;text-align:center;font-size:12px;line-height:13px">Area</div>
<div class="ab" style="left:730px;top:0px;width:80px;height:56px;background:#bfd4eb;border-top:1px solid #fff;border-left:1px solid #fff"></div>
<div class="t b" style="left:730px;top:2px;width:80px;text-align:center;font-size:12px;line-height:13px">East<br>(m)</div>
<div class="ab" style="left:811px;top:0px;width:80px;height:56px;background:#bfd4eb;border-top:1px solid #fff;border-left:1px solid #fff"></div>
<div class="t b" style="left:811px;top:2px;width:80px;text-align:center;font-size:12px;line-height:13px">North<br>(m)</div>
<div class="ab" style="left:892px;top:0px;width:77px;height:56px;background:#bfd4eb;border-top:1px solid #fff;border-left:1px solid #fff"></div>
<div class="t b" style="left:892px;top:2px;width:77px;text-align:center;font-size:12px;line-height:13px">Elevation<br>(m)</div>
<div class="ab" style="left:970px;top:0px;width:76px;height:56px;background:#bfd4eb;border-top:1px solid #fff;border-left:1px solid #fff"></div>
<div class="t b" style="left:970px;top:2px;width:76px;text-align:center;font-size:12px;line-height:13px">Method of<br>Location XY</div>
<div class="ab" style="left:1047px;top:0px;width:74px;height:56px;background:#bfd4eb;border-top:1px solid #fff;border-left:1px solid #fff"></div>
<div class="t b" style="left:1047px;top:2px;width:74px;text-align:center;font-size:12px;line-height:13px">Method of<br>Location Z</div>
<div class="ab" style="left:1122px;top:0px;width:84px;height:56px;background:#bfd4eb;border-top:1px solid #fff;border-left:1px solid #fff"></div>
<div class="t b" style="left:1122px;top:2px;width:84px;text-align:center;font-size:12px;line-height:13px">Inclination<br>(deg)</div>
<div class="ab" style="left:1207px;top:0px;width:89px;height:56px;background:#bfd4eb;border-top:1px solid #fff;border-left:1px solid #fff"></div>
<div class="t b" style="left:1207px;top:2px;width:89px;text-align:center;font-size:12px;line-height:13px">Orientation<br>(deg)</div>
<div class="ab" style="left:1297px;top:0px;width:103px;height:56px;background:#bfd4eb;border-top:1px solid #fff;border-left:1px solid #fff"></div>
<div class="t b" style="left:1297px;top:2px;width:54px;text-align:center;font-size:12px;line-height:13px">Date<br>Started<br>(dd/mm/<br>yyyy)</div>
<div class="ab" style="left:16px;top:0px;width:1px;height:700px;background:#a0a0a8;"></div>
<div class="ab" style="left:300px;top:0px;width:1px;height:700px;background:#6a6a6a;"></div>
<div class="ab" style="left:364px;top:0px;width:1px;height:700px;background:#909090;"></div>
<div class="ab" style="left:421px;top:0px;width:1px;height:700px;background:#909090;"></div>
<div class="ab" style="left:729px;top:0px;width:1px;height:700px;background:#909090;"></div>
<div class="ab" style="left:810px;top:0px;width:1px;height:700px;background:#909090;"></div>
<div class="ab" style="left:891px;top:0px;width:1px;height:700px;background:#909090;"></div>
<div class="ab" style="left:969px;top:0px;width:1px;height:700px;background:#909090;"></div>
<div class="ab" style="left:1046px;top:0px;width:1px;height:700px;background:#909090;"></div>
<div class="ab" style="left:1121px;top:0px;width:1px;height:700px;background:#909090;"></div>
<div class="ab" style="left:1206px;top:0px;width:1px;height:700px;background:#909090;"></div>
<div class="ab" style="left:1296px;top:0px;width:1px;height:700px;background:#909090;"></div>
<div class="ab" style="left:17px;top:57px;width:283px;height:640px;background:#ffff80;"></div>
<div class="ab" style="left:365px;top:57px;width:56px;height:640px;background:#ffff80;"></div>
<div class="ab" style="left:0px;top:75px;width:1400px;height:1px;background:#909090;"></div>
<div class="ab" style="left:0px;top:57px;width:16px;height:18px;background:#bfd4eb;border-top:1px solid #fff;border-left:1px solid #fff"></div>
<div class="t b" style="left:20.0px;top:59px;font-size:12px;letter-spacing:.12px">CPT<span style="letter-spacing:.45px">-</span>B<span style="letter-spacing:.45px">-32</span></div>
<div class="t b" style="left:304.0px;top:59px;font-size:12px;letter-spacing:.12px">CPT</div>
<div class="t b" style="left:364px;top:59px;width:55.4px;text-align:right;font-size:12px;letter-spacing:.12px"><span style="letter-spacing:.45px">0.00</span></div>
<div class="t b" style="left:1306.7px;top:59px;font-size:12px;letter-spacing:.12px"><span style="letter-spacing:.7px">2</span><span style="letter-spacing:.7px">7</span><span style="padding:0 .6px">/</span><span style="letter-spacing:.7px">9</span><span style="padding:0 .6px">/</span><span style="letter-spacing:.7px">2</span><span style="letter-spacing:.7px">0</span><span style="letter-spacing:.7px">1</span><span style="letter-spacing:.7px">9</span></div>
<div class="ab" style="left:0px;top:94px;width:1400px;height:1px;background:#909090;"></div>
<div class="ab" style="left:0px;top:76px;width:16px;height:18px;background:#bfd4eb;border-top:1px solid #fff;border-left:1px solid #fff"></div>
<div class="t b" style="left:20.0px;top:78px;font-size:12px;letter-spacing:.12px">Datem Neptune <span style="letter-spacing:.45px">01</span></div>
<div class="t b" style="left:304.0px;top:78px;font-size:12px;letter-spacing:.12px">CPT</div>
<div class="t b" style="left:364px;top:78px;width:55.4px;text-align:right;font-size:12px;letter-spacing:.12px"><span style="letter-spacing:.45px">5.00</span></div>
<div class="t b" style="left:1303.2px;top:78px;font-size:12px;letter-spacing:.12px"><span style="letter-spacing:.7px">2</span><span style="letter-spacing:.7px">6</span><span style="padding:0 .6px">/</span><span style="letter-spacing:.7px">4</span><span style="padding:0 .6px">/</span><span style="letter-spacing:.7px">2</span><span style="letter-spacing:.7px">0</span><span style="letter-spacing:.7px">1</span><span style="letter-spacing:.7px">9</span></div>
<div class="ab" style="left:0px;top:113px;width:1400px;height:1px;background:#909090;"></div>
<div class="ab" style="left:0px;top:95px;width:16px;height:18px;background:#bfd4eb;border-top:1px solid #fff;border-left:1px solid #fff"></div>
<div class="t b" style="left:20.0px;top:97px;font-size:12px;letter-spacing:.12px">Datem Neptune <span style="letter-spacing:.45px">02</span></div>
<div class="t b" style="left:304.0px;top:97px;font-size:12px;letter-spacing:.12px">CPT</div>
<div class="t b" style="left:364px;top:97px;width:55.4px;text-align:right;font-size:12px;letter-spacing:.12px"><span style="letter-spacing:.45px">4.59</span></div>
<div class="t b" style="left:1306.7px;top:97px;font-size:12px;letter-spacing:.12px"><span style="letter-spacing:.7px">2</span><span style="letter-spacing:.7px">1</span><span style="padding:0 .6px">/</span><span style="letter-spacing:.7px">6</span><span style="padding:0 .6px">/</span><span style="letter-spacing:.7px">2</span><span style="letter-spacing:.7px">0</span><span style="letter-spacing:.7px">1</span><span style="letter-spacing:.7px">9</span></div>
<div class="ab" style="left:0px;top:132px;width:1400px;height:1px;background:#909090;"></div>
<div class="ab" style="left:0px;top:114px;width:16px;height:18px;background:#bfd4eb;border-top:1px solid #fff;border-left:1px solid #fff"></div>
<div class="t b" style="left:20.0px;top:116px;font-size:12px;letter-spacing:.12px">DKM<span style="letter-spacing:.45px">9999.1</span></div>
<div class="t b" style="left:304.0px;top:116px;font-size:12px;letter-spacing:.12px">CPT</div>
<div class="t b" style="left:364px;top:116px;width:55.4px;text-align:right;font-size:12px;letter-spacing:.12px"><span style="letter-spacing:.45px">25.00</span></div>
<div class="t b" style="left:425.0px;top:116px;font-size:12px;letter-spacing:.12px">MT<span style="letter-spacing:.45px">41</span></div>
<div class="t b" style="left:729px;top:116px;width:79.4px;text-align:right;font-size:12px;letter-spacing:.12px"><span style="letter-spacing:.45px">220010.0</span></div>
<div class="t b" style="left:810px;top:116px;width:79.4px;text-align:right;font-size:12px;letter-spacing:.12px"><span style="letter-spacing:.45px">575950.0</span></div>
<div class="t b" style="left:891px;top:116px;width:76.4px;text-align:right;font-size:12px;letter-spacing:.12px"><span style="letter-spacing:.45px">1.00</span></div>
<div class="t b" style="left:973.0px;top:116px;font-size:12px;letter-spacing:.12px">LDGZ <span style="letter-spacing:.45px">0.05</span></div>
<div class="t b" style="left:1050.0px;top:116px;font-size:12px;letter-spacing:.12px">MDGP <span style="letter-spacing:.45px">0.05</span></div>
<div class="t b" style="left:1306.9px;top:116px;font-size:12px;letter-spacing:.12px"><span style="letter-spacing:.7px">1</span><span style="letter-spacing:.7px">1</span><span style="padding:0 .6px">/</span><span style="letter-spacing:.7px">4</span><span style="padding:0 .6px">/</span><span style="letter-spacing:.7px">2</span><span style="letter-spacing:.7px">0</span><span style="letter-spacing:.7px">1</span><span style="letter-spacing:.7px">9</span></div>
<div class="ab" style="left:0px;top:151px;width:1400px;height:1px;background:#909090;"></div>
<div class="ab" style="left:0px;top:133px;width:16px;height:18px;background:#bfd4eb;border-top:1px solid #fff;border-left:1px solid #fff"></div>
<div class="t b" style="left:20.0px;top:135px;font-size:12px;letter-spacing:.12px">Garrucha</div>
<div class="t b" style="left:304.0px;top:135px;font-size:12px;letter-spacing:.12px">CPT</div>
<div class="t b" style="left:364px;top:135px;width:55.4px;text-align:right;font-size:12px;letter-spacing:.12px"><span style="letter-spacing:.45px">7.81</span></div>
<div class="t b" style="left:1303.2px;top:135px;font-size:12px;letter-spacing:.12px"><span style="letter-spacing:.7px">6</span><span style="padding:0 .6px">/</span><span style="letter-spacing:.7px">1</span><span style="letter-spacing:.7px">0</span><span style="padding:0 .6px">/</span><span style="letter-spacing:.7px">2</span><span style="letter-spacing:.7px">0</span><span style="letter-spacing:.7px">1</span><span style="letter-spacing:.7px">9</span></div>
<div class="ab" style="left:0px;top:170px;width:1400px;height:1px;background:#909090;"></div>
<div class="ab" style="left:0px;top:152px;width:16px;height:18px;background:#bfd4eb;border-top:1px solid #fff;border-left:1px solid #fff"></div>
<div class="t b" style="left:20.0px;top:154px;font-size:12px;letter-spacing:.12px">GEF <span style="letter-spacing:.45px">01</span></div>
<div class="t b" style="left:304.0px;top:154px;font-size:12px;letter-spacing:.12px">CPT</div>
<div class="t b" style="left:364px;top:154px;width:55.4px;text-align:right;font-size:12px;letter-spacing:.12px"><span style="letter-spacing:.45px">8.56</span></div>
<div class="t b" style="left:891px;top:154px;width:76.4px;text-align:right;font-size:12px;letter-spacing:.12px"><span style="letter-spacing:.45px">0.00</span></div>
<div class="t b" style="left:977.2px;top:154px;font-size:12px;letter-spacing:.12px"><span style="letter-spacing:.45px">1</span></div>
<div class="t b" style="left:1054.2px;top:154px;font-size:12px;letter-spacing:.12px"><span style="letter-spacing:.45px">0.001</span></div>
<div class="t b" style="left:1306.9px;top:154px;font-size:12px;letter-spacing:.12px"><span style="letter-spacing:.7px">5</span><span style="padding:0 .6px">/</span><span style="letter-spacing:.7px">1</span><span style="letter-spacing:.7px">0</span><span style="padding:0 .6px">/</span><span style="letter-spacing:.7px">2</span><span style="letter-spacing:.7px">0</span><span style="letter-spacing:.7px">1</span><span style="letter-spacing:.7px">9</span></div>
<div class="ab" style="left:0px;top:189px;width:1400px;height:1px;background:#909090;"></div>
<div class="ab" style="left:0px;top:171px;width:16px;height:18px;background:#bfd4eb;border-top:1px solid #fff;border-left:1px solid #fff"></div>
<div class="t b" style="left:20.0px;top:173px;font-size:12px;letter-spacing:.12px">GEF <span style="letter-spacing:.45px">01</span>a</div>
<div class="t b" style="left:304.0px;top:173px;font-size:12px;letter-spacing:.12px">CPT</div>
<div class="t b" style="left:364px;top:173px;width:55.4px;text-align:right;font-size:12px;letter-spacing:.12px"><span style="letter-spacing:.45px">8.56</span></div>
<div class="t b" style="left:891px;top:173px;width:76.4px;text-align:right;font-size:12px;letter-spacing:.12px"><span style="letter-spacing:.45px">0.00</span></div>
<div class="t b" style="left:977.2px;top:173px;font-size:12px;letter-spacing:.12px"><span style="letter-spacing:.45px">1</span></div>
<div class="t b" style="left:1054.2px;top:173px;font-size:12px;letter-spacing:.12px"><span style="letter-spacing:.45px">0.001</span></div>
<div class="t b" style="left:1306.9px;top:173px;font-size:12px;letter-spacing:.12px"><span style="letter-spacing:.7px">5</span><span style="padding:0 .6px">/</span><span style="letter-spacing:.7px">1</span><span style="letter-spacing:.7px">0</span><span style="padding:0 .6px">/</span><span style="letter-spacing:.7px">2</span><span style="letter-spacing:.7px">0</span><span style="letter-spacing:.7px">1</span><span style="letter-spacing:.7px">9</span></div>
<div class="ab" style="left:0px;top:208px;width:1400px;height:1px;background:#909090;"></div>
<div class="ab" style="left:0px;top:190px;width:16px;height:18px;background:#bfd4eb;border-top:1px solid #fff;border-left:1px solid #fff"></div>
<div class="t b" style="left:20.0px;top:192px;font-size:12px;letter-spacing:.12px">GEF <span style="letter-spacing:.45px">01</span>b</div>
<div class="t b" style="left:304.0px;top:192px;font-size:12px;letter-spacing:.12px">CPT</div>
<div class="t b" style="left:364px;top:192px;width:55.4px;text-align:right;font-size:12px;letter-spacing:.12px"><span style="letter-spacing:.45px">8.56</span></div>
<div class="t b" style="left:891px;top:192px;width:76.4px;text-align:right;font-size:12px;letter-spacing:.12px"><span style="letter-spacing:.45px">0.00</span></div>
<div class="t b" style="left:977.2px;top:192px;font-size:12px;letter-spacing:.12px"><span style="letter-spacing:.45px">1</span></div>
<div class="t b" style="left:1054.2px;top:192px;font-size:12px;letter-spacing:.12px"><span style="letter-spacing:.45px">0.001</span></div>
<div class="t b" style="left:1306.9px;top:192px;font-size:12px;letter-spacing:.12px"><span style="letter-spacing:.7px">5</span><span style="padding:0 .6px">/</span><span style="letter-spacing:.7px">1</span><span style="letter-spacing:.7px">0</span><span style="padding:0 .6px">/</span><span style="letter-spacing:.7px">2</span><span style="letter-spacing:.7px">0</span><span style="letter-spacing:.7px">1</span><span style="letter-spacing:.7px">9</span></div>
<div class="ab" style="left:0px;top:227px;width:1400px;height:1px;background:#909090;"></div>
<div class="ab" style="left:0px;top:209px;width:16px;height:18px;background:#bfd4eb;border-top:1px solid #fff;border-left:1px solid #fff"></div>
<div class="t b" style="left:20.0px;top:211px;font-size:12px;letter-spacing:.12px">GEF <span style="letter-spacing:.45px">02</span></div>
<div class="t b" style="left:304.0px;top:211px;font-size:12px;letter-spacing:.12px">CPT</div>
<div class="t b" style="left:364px;top:211px;width:55.4px;text-align:right;font-size:12px;letter-spacing:.12px"><span style="letter-spacing:.45px">37.67</span></div>
<div class="t b" style="left:729px;top:211px;width:79.4px;text-align:right;font-size:12px;letter-spacing:.12px"><span style="letter-spacing:.45px">0.0</span></div>
<div class="t b" style="left:810px;top:211px;width:79.4px;text-align:right;font-size:12px;letter-spacing:.12px"><span style="letter-spacing:.45px">0.0</span></div>
<div class="t b" style="left:891px;top:211px;width:76.4px;text-align:right;font-size:12px;letter-spacing:.12px"><span style="letter-spacing:.45px">2.00</span></div>
<div class="t b" style="left:977.2px;top:211px;font-size:12px;letter-spacing:.12px"><span style="letter-spacing:.45px">0</span></div>
<div class="t b" style="left:1054.2px;top:211px;font-size:12px;letter-spacing:.12px"><span style="letter-spacing:.45px">0.0001</span></div>
<div class="t b" style="left:1335.8px;top:211px;font-size:12px;letter-spacing:.12px"><span style="letter-spacing:.7px">1</span><span style="letter-spacing:.7px">2</span></div>
<div class="ab" style="left:0px;top:246px;width:1400px;height:1px;background:#909090;"></div>
<div class="ab" style="left:0px;top:228px;width:16px;height:18px;background:#bfd4eb;border-top:1px solid #fff;border-left:1px solid #fff"></div>
<div class="t b" style="left:20.0px;top:230px;font-size:12px;letter-spacing:.12px">GEF <span style="letter-spacing:.45px">02</span> <span style="letter-spacing:.45px">99.99</span>m long</div>
<div class="t b" style="left:304.0px;top:230px;font-size:12px;letter-spacing:.12px">CPT</div>
<div class="t b" style="left:364px;top:230px;width:55.4px;text-align:right;font-size:12px;letter-spacing:.12px"><span style="letter-spacing:.45px">99.99</span></div>
<div class="t b" style="left:729px;top:230px;width:79.4px;text-align:right;font-size:12px;letter-spacing:.12px"><span style="letter-spacing:.45px">0.0</span></div>
<div class="t b" style="left:810px;top:230px;width:79.4px;text-align:right;font-size:12px;letter-spacing:.12px"><span style="letter-spacing:.45px">0.0</span></div>
<div class="t b" style="left:891px;top:230px;width:76.4px;text-align:right;font-size:12px;letter-spacing:.12px"><span style="letter-spacing:.45px">2.00</span></div>
<div class="t b" style="left:977.2px;top:230px;font-size:12px;letter-spacing:.12px"><span style="letter-spacing:.45px">0</span></div>
<div class="t b" style="left:1054.2px;top:230px;font-size:12px;letter-spacing:.12px"><span style="letter-spacing:.45px">0.0001</span></div>
<div class="t b" style="left:1335.8px;top:230px;font-size:12px;letter-spacing:.12px"><span style="letter-spacing:.7px">1</span><span style="letter-spacing:.7px">2</span></div>
<div class="ab" style="left:0px;top:265px;width:1400px;height:1px;background:#909090;"></div>
<div class="ab" style="left:0px;top:247px;width:16px;height:18px;background:#bfd4eb;border-top:1px solid #fff;border-left:1px solid #fff"></div>
<div class="t b" style="left:20.0px;top:249px;font-size:12px;letter-spacing:.12px">GEF <span style="letter-spacing:.45px">03</span></div>
<div class="t b" style="left:304.0px;top:249px;font-size:12px;letter-spacing:.12px">CPT</div>
<div class="t b" style="left:364px;top:249px;width:55.4px;text-align:right;font-size:12px;letter-spacing:.12px"><span style="letter-spacing:.45px">25.53</span></div>
<div class="t b" style="left:729px;top:249px;width:79.4px;text-align:right;font-size:12px;letter-spacing:.12px"><span style="letter-spacing:.45px">0.0</span></div>
<div class="t b" style="left:810px;top:249px;width:79.4px;text-align:right;font-size:12px;letter-spacing:.12px"><span style="letter-spacing:.45px">0.0</span></div>
<div class="t b" style="left:891px;top:249px;width:76.4px;text-align:right;font-size:12px;letter-spacing:.12px"><span style="letter-spacing:.45px">0.00</span></div>
<div class="t b" style="left:977.2px;top:249px;font-size:12px;letter-spacing:.12px"><span style="letter-spacing:.45px">0</span></div>
<div class="t b" style="left:1054.2px;top:249px;font-size:12px;letter-spacing:.12px"><span style="letter-spacing:.45px">0.0001</span></div>
<div class="t b" style="left:1339.0px;top:249px;font-size:12px;letter-spacing:.12px"><span style="letter-spacing:.7px">3</span><span style="letter-spacing:.7px">:</span><span style="letter-spacing:.7px">0</span><span style="letter-spacing:.7px">0</span></div>
<div class="ab" style="left:0px;top:284px;width:1400px;height:1px;background:#909090;"></div>
<div class="ab" style="left:0px;top:266px;width:16px;height:18px;background:#fffde0;border-top:1px solid #fff;border-left:1px solid #fff"></div>
<div class="t b" style="left:20.0px;top:268px;font-size:12px;letter-spacing:.12px">Gorilla <span style="letter-spacing:.45px">04</span></div>
<div class="t b" style="left:304.0px;top:268px;font-size:12px;letter-spacing:.12px">CPT</div>
<div class="t b" style="left:364px;top:268px;width:55.4px;text-align:right;font-size:12px;letter-spacing:.12px"><span style="letter-spacing:.45px">3.00</span></div>
<div class="t b" style="left:1300.0px;top:268px;font-size:12px;letter-spacing:.12px"><span style="letter-spacing:.7px">1</span><span style="letter-spacing:.7px">6</span><span style="padding:0 .6px">/</span><span style="letter-spacing:.7px">1</span><span style="letter-spacing:.7px">1</span><span style="padding:0 .6px">/</span><span style="letter-spacing:.7px">2</span><span style="letter-spacing:.7px">0</span><span style="letter-spacing:.7px">1</span><span style="letter-spacing:.7px">9</span></div>
<div class="ab" style="left:0px;top:303px;width:1400px;height:1px;background:#909090;"></div>
<div class="ab" style="left:0px;top:285px;width:16px;height:18px;background:#bfd4eb;border-top:1px solid #fff;border-left:1px solid #fff"></div>
<div class="t b" style="left:20.0px;top:287px;font-size:12px;letter-spacing:.12px">Gorilla <span style="letter-spacing:.45px">04.1</span></div>
<div class="t b" style="left:304.0px;top:287px;font-size:12px;letter-spacing:.12px">CPT</div>
<div class="t b" style="left:364px;top:287px;width:55.4px;text-align:right;font-size:12px;letter-spacing:.12px"><span style="letter-spacing:.45px">21.00</span></div>
<div class="t b" style="left:1300.0px;top:287px;font-size:12px;letter-spacing:.12px"><span style="letter-spacing:.7px">1</span><span style="letter-spacing:.7px">6</span><span style="padding:0 .6px">/</span><span style="letter-spacing:.7px">1</span><span style="letter-spacing:.7px">1</span><span style="padding:0 .6px">/</span><span style="letter-spacing:.7px">2</span><span style="letter-spacing:.7px">0</span><span style="letter-spacing:.7px">1</span><span style="letter-spacing:.7px">9</span></div>
<div class="ab" style="left:0px;top:322px;width:1400px;height:1px;background:#909090;"></div>
<div class="ab" style="left:0px;top:304px;width:16px;height:18px;background:#bfd4eb;border-top:1px solid #fff;border-left:1px solid #fff"></div>
<div class="t b" style="left:20.0px;top:306px;font-size:12px;letter-spacing:.12px">HKN<span style="letter-spacing:.45px">-</span>TENNET<span style="letter-spacing:.45px">03-</span>CP</div>
<div class="t b" style="left:304.0px;top:306px;font-size:12px;letter-spacing:.12px">CPT</div>
<div class="t b" style="left:364px;top:306px;width:55.4px;text-align:right;font-size:12px;letter-spacing:.12px"><span style="letter-spacing:.45px">101.97</span></div>
<div class="t b" style="left:425.0px;top:306px;font-size:12px;letter-spacing:.12px">Produced by Datgel CPT Tool</div>
<div class="t b" style="left:729px;top:306px;width:79.4px;text-align:right;font-size:12px;letter-spacing:.12px"><span style="letter-spacing:.45px">5839443.3</span></div>
<div class="t b" style="left:810px;top:306px;width:79.4px;text-align:right;font-size:12px;letter-spacing:.12px"><span style="letter-spacing:.45px">0.1</span></div>
<div class="t b" style="left:977.2px;top:306px;font-size:12px;letter-spacing:.12px"><span style="letter-spacing:.45px">1</span></div>
<div class="t b" style="left:1054.2px;top:306px;font-size:12px;letter-spacing:.12px"><span style="letter-spacing:.45px">1</span></div>
<div class="ab" style="left:0px;top:341px;width:1400px;height:1px;background:#909090;"></div>
<div class="ab" style="left:0px;top:323px;width:16px;height:18px;background:#bfd4eb;border-top:1px solid #fff;border-left:1px solid #fff"></div>
<div class="t b" style="left:20.0px;top:325px;font-size:12px;letter-spacing:.12px">Pag <span style="letter-spacing:.45px">01</span></div>
<div class="t b" style="left:304.0px;top:325px;font-size:12px;letter-spacing:.12px">CPT</div>
<div class="t b" style="left:364px;top:325px;width:55.4px;text-align:right;font-size:12px;letter-spacing:.12px"><span style="letter-spacing:.45px">6.09</span></div>
<div class="t b" style="left:1345.3px;top:325px;font-size:12px;letter-spacing:.12px"><span style="letter-spacing:.7px">1</span><span style="padding:0 .6px">/</span><span style="letter-spacing:.7px">1</span><span style="padding:0 .6px">/</span><span style="letter-spacing:.7px">2</span><span style="letter-spacing:.7px">0</span><span style="letter-spacing:.7px">1</span><span style="letter-spacing:.7px">9</span></div>
<div class="ab" style="left:0px;top:360px;width:1400px;height:1px;background:#909090;"></div>
<div class="ab" style="left:0px;top:342px;width:16px;height:18px;background:#bfd4eb;border-top:1px solid #fff;border-left:1px solid #fff"></div>
<div class="t b" style="left:20.0px;top:344px;font-size:12px;letter-spacing:.12px">Pagani <span style="letter-spacing:.45px">02</span></div>
<div class="t b" style="left:304.0px;top:344px;font-size:12px;letter-spacing:.12px">CPT</div>
<div class="t b" style="left:364px;top:344px;width:55.4px;text-align:right;font-size:12px;letter-spacing:.12px"><span style="letter-spacing:.45px">2.84</span></div>
<div class="t b" style="left:729px;top:344px;width:79.4px;text-align:right;font-size:12px;letter-spacing:.12px"><span style="letter-spacing:.45px">450207.0</span></div>
<div class="t b" style="left:810px;top:344px;width:79.4px;text-align:right;font-size:12px;letter-spacing:.12px"><span style="letter-spacing:.45px">2904602.0</span></div>
<div class="t b" style="left:1340.8px;top:344px;font-size:12px;letter-spacing:.12px"><span style="letter-spacing:.7px">1</span><span style="letter-spacing:.7px">8</span><span style="padding:0 .6px">/</span><span style="letter-spacing:.7px">1</span><span style="padding:0 .6px">/</span><span style="letter-spacing:.7px">2</span><span style="letter-spacing:.7px">0</span><span style="letter-spacing:.7px">1</span><span style="letter-spacing:.7px">9</span></div>
<div class="ab" style="left:0px;top:379px;width:1400px;height:1px;background:#909090;"></div>
<div class="ab" style="left:0px;top:361px;width:16px;height:18px;background:#bfd4eb;border-top:1px solid #fff;border-left:1px solid #fff"></div>
<div class="t b" style="left:20.0px;top:363px;font-size:12px;letter-spacing:.12px">Pagani CPTU<span style="letter-spacing:.45px">-</span>ACQ cpt <span style="letter-spacing:.45px">01</span></div>
<div class="t b" style="left:304.0px;top:363px;font-size:12px;letter-spacing:.12px">CPT</div>
<div class="t b" style="left:364px;top:363px;width:55.4px;text-align:right;font-size:12px;letter-spacing:.12px"><span style="letter-spacing:.45px">5.69</span></div>
<div class="t b" style="left:729px;top:363px;width:79.4px;text-align:right;font-size:12px;letter-spacing:.12px"><span style="letter-spacing:.45px">2910248.9</span></div>
<div class="t b" style="left:810px;top:363px;width:79.4px;text-align:right;font-size:12px;letter-spacing:.12px"><span style="letter-spacing:.45px">462239.3</span></div>
<div class="ab" style="left:0px;top:398px;width:1400px;height:1px;background:#909090;"></div>
<div class="ab" style="left:0px;top:380px;width:16px;height:18px;background:#bfd4eb;border-top:1px solid #fff;border-left:1px solid #fff"></div>
<div class="t b" style="left:20.0px;top:382px;font-size:12px;letter-spacing:.12px">Pagani CPTU<span style="letter-spacing:.45px">-</span>ACQ cpt <span style="letter-spacing:.45px">01</span>a</div>
<div class="t b" style="left:304.0px;top:382px;font-size:12px;letter-spacing:.12px">CPT</div>
<div class="t b" style="left:364px;top:382px;width:55.4px;text-align:right;font-size:12px;letter-spacing:.12px"><span style="letter-spacing:.45px">5.69</span></div>
<div class="t b" style="left:729px;top:382px;width:79.4px;text-align:right;font-size:12px;letter-spacing:.12px"><span style="letter-spacing:.45px">2910248.9</span></div>
<div class="t b" style="left:810px;top:382px;width:79.4px;text-align:right;font-size:12px;letter-spacing:.12px"><span style="letter-spacing:.45px">462239.3</span></div>
<div class="ab" style="left:0px;top:417px;width:1400px;height:1px;background:#909090;"></div>
<div class="ab" style="left:0px;top:399px;width:16px;height:18px;background:#bfd4eb;border-top:1px solid #fff;border-left:1px solid #fff"></div>
<div class="t b" style="left:20.0px;top:401px;font-size:12px;letter-spacing:.12px">Pagani TGAS<span style="letter-spacing:.45px">08</span> csv <span style="letter-spacing:.45px">02</span></div>
<div class="t b" style="left:304.0px;top:401px;font-size:12px;letter-spacing:.12px">CPT</div>
<div class="t b" style="left:364px;top:401px;width:55.4px;text-align:right;font-size:12px;letter-spacing:.12px"><span style="letter-spacing:.45px">0.38</span></div>
<div class="t b" style="left:425.0px;top:401px;font-size:12px;letter-spacing:.12px">ws</div>
<div class="t b" style="left:729px;top:401px;width:79.4px;text-align:right;font-size:12px;letter-spacing:.12px"><span style="letter-spacing:.45px">5127.0</span></div>
<div class="t b" style="left:810px;top:401px;width:79.4px;text-align:right;font-size:12px;letter-spacing:.12px"><span style="letter-spacing:.45px">2510.3</span></div>
<div class="t b" style="left:891px;top:401px;width:76.4px;text-align:right;font-size:12px;letter-spacing:.12px"><span style="letter-spacing:.45px">0.00</span></div>
<div class="t b" style="left:1303.2px;top:401px;font-size:12px;letter-spacing:.12px"><span style="letter-spacing:.7px">1</span><span style="letter-spacing:.7px">1</span><span style="padding:0 .6px">/</span><span style="letter-spacing:.7px">5</span><span style="padding:0 .6px">/</span><span style="letter-spacing:.7px">2</span><span style="letter-spacing:.7px">0</span><span style="letter-spacing:.7px">1</span><span style="letter-spacing:.7px">9</span></div>
<div class="ab" style="left:0px;top:436px;width:1400px;height:1px;background:#909090;"></div>
<div class="ab" style="left:0px;top:418px;width:16px;height:18px;background:#bfd4eb;border-top:1px solid #fff;border-left:1px solid #fff"></div>
<div class="t b" style="left:20.0px;top:420px;font-size:12px;letter-spacing:.12px">PD<span style="letter-spacing:.45px">0002</span>T</div>
<div class="t b" style="left:304.0px;top:420px;font-size:12px;letter-spacing:.12px">CPT</div>
<div class="t b" style="left:364px;top:420px;width:55.4px;text-align:right;font-size:12px;letter-spacing:.12px"><span style="letter-spacing:.45px">0.52</span></div>
<div class="t b" style="left:425.0px;top:420px;font-size:12px;letter-spacing:.12px">WSHOP <span style="letter-spacing:.45px">06-11-19</span></div>
<div class="t b" style="left:1306.9px;top:420px;font-size:12px;letter-spacing:.12px"><span style="letter-spacing:.7px">8</span><span style="padding:0 .6px">/</span><span style="letter-spacing:.7px">1</span><span style="letter-spacing:.7px">1</span><span style="padding:0 .6px">/</span><span style="letter-spacing:.7px">2</span><span style="letter-spacing:.7px">0</span><span style="letter-spacing:.7px">1</span><span style="letter-spacing:.7px">9</span></div>
<div class="ab" style="left:0px;top:455px;width:1400px;height:1px;background:#909090;"></div>
<div class="ab" style="left:0px;top:437px;width:16px;height:18px;background:#bfd4eb;border-top:1px solid #fff;border-left:1px solid #fff"></div>
<div class="t b" style="left:20.0px;top:439px;font-size:12px;letter-spacing:.12px">PD<span style="letter-spacing:.45px">0002</span>T<span style="letter-spacing:.45px">-</span>old</div>
<div class="t b" style="left:304.0px;top:439px;font-size:12px;letter-spacing:.12px">CPT</div>
<div class="t b" style="left:364px;top:439px;width:55.4px;text-align:right;font-size:12px;letter-spacing:.12px"><span style="letter-spacing:.45px">0.52</span></div>
<div class="t b" style="left:425.0px;top:439px;font-size:12px;letter-spacing:.12px">WSHOP <span style="letter-spacing:.45px">06-11-19</span></div>
<div class="t b" style="left:1306.9px;top:439px;font-size:12px;letter-spacing:.12px"><span style="letter-spacing:.7px">8</span><span style="padding:0 .6px">/</span><span style="letter-spacing:.7px">1</span><span style="letter-spacing:.7px">1</span><span style="padding:0 .6px">/</span><span style="letter-spacing:.7px">2</span><span style="letter-spacing:.7px">0</span><span style="letter-spacing:.7px">1</span><span style="letter-spacing:.7px">9</span></div>
<div class="ab" style="left:0px;top:474px;width:1400px;height:1px;background:#909090;"></div>
<div class="ab" style="left:0px;top:456px;width:16px;height:18px;background:#bfd4eb;border-top:1px solid #fff;border-left:1px solid #fff"></div>
<div class="t b" style="left:20.0px;top:458px;font-size:12px;letter-spacing:.12px">Probedrill_<span style="letter-spacing:.45px">01-</span>old</div>
<div class="t b" style="left:304.0px;top:458px;font-size:12px;letter-spacing:.12px">CPT</div>
<div class="t b" style="left:364px;top:458px;width:55.4px;text-align:right;font-size:12px;letter-spacing:.12px"><span style="letter-spacing:.45px">20.17</span></div>
<div class="t b" style="left:425.0px;top:458px;font-size:12px;letter-spacing:.12px">Place</div>
<div class="t b" style="left:729px;top:458px;width:79.4px;text-align:right;font-size:12px;letter-spacing:.12px"><span style="letter-spacing:.45px">262993.0</span></div>
<div class="t b" style="left:810px;top:458px;width:79.4px;text-align:right;font-size:12px;letter-spacing:.12px"><span style="letter-spacing:.45px">6266119.7</span></div>
<div class="t b" style="left:891px;top:458px;width:76.4px;text-align:right;font-size:12px;letter-spacing:.12px"><span style="letter-spacing:.45px">3.10</span></div>
<div class="t b" style="left:1303.2px;top:458px;font-size:12px;letter-spacing:.12px"><span style="letter-spacing:.7px">1</span><span style="letter-spacing:.7px">9</span><span style="padding:0 .6px">/</span><span style="letter-spacing:.7px">5</span><span style="padding:0 .6px">/</span><span style="letter-spacing:.7px">2</span><span style="letter-spacing:.7px">0</span><span style="letter-spacing:.7px">1</span><span style="letter-spacing:.7px">9</span></div>
<div class="ab" style="left:0px;top:493px;width:1400px;height:1px;background:#909090;"></div>
<div class="ab" style="left:0px;top:475px;width:16px;height:18px;background:#bfd4eb;border-top:1px solid #fff;border-left:1px solid #fff"></div>
<div class="t b" style="left:20.0px;top:477px;font-size:12px;letter-spacing:.12px">SV<span style="letter-spacing:.45px">-</span>A<span style="letter-spacing:.45px">02</span></div>
<div class="t b" style="left:304.0px;top:477px;font-size:12px;letter-spacing:.12px">CPT</div>
<div class="t b" style="left:364px;top:477px;width:55.4px;text-align:right;font-size:12px;letter-spacing:.12px"><span style="letter-spacing:.45px">21.33</span></div>
<div class="t b" style="left:425.0px;top:477px;font-size:12px;letter-spacing:.12px">SV<span style="letter-spacing:.45px">-</span>A<span style="letter-spacing:.45px">02</span></div>
<div class="t b" style="left:1337.6px;top:477px;font-size:12px;letter-spacing:.12px"><span style="letter-spacing:.7px">1</span><span style="letter-spacing:.7px">3</span><span style="padding:0 .6px">/</span><span style="letter-spacing:.7px">1</span><span style="padding:0 .6px">/</span><span style="letter-spacing:.7px">2</span><span style="letter-spacing:.7px">0</span><span style="letter-spacing:.7px">1</span><span style="letter-spacing:.7px">9</span></div>
<div class="ab" style="left:0px;top:512px;width:1400px;height:1px;background:#909090;"></div>
<div class="ab" style="left:0px;top:494px;width:16px;height:18px;background:#bfd4eb;border-top:1px solid #fff;border-left:1px solid #fff"></div>
<div class="t b" style="left:20.0px;top:496px;font-size:12px;letter-spacing:.12px">TC from Pit in Acetyl</div>
<div class="t b" style="left:304.0px;top:496px;font-size:12px;letter-spacing:.12px">CPT</div>
<div class="t b" style="left:364px;top:496px;width:55.4px;text-align:right;font-size:12px;letter-spacing:.12px"><span style="letter-spacing:.45px">0.22</span></div>
<div class="t b" style="left:1306.9px;top:496px;font-size:12px;letter-spacing:.12px"><span style="letter-spacing:.7px">2</span><span style="letter-spacing:.7px">1</span><span style="padding:0 .6px">/</span><span style="letter-spacing:.7px">5</span><span style="padding:0 .6px">/</span><span style="letter-spacing:.7px">2</span><span style="letter-spacing:.7px">0</span><span style="letter-spacing:.7px">1</span><span style="letter-spacing:.7px">9</span></div>
<div class="ab" style="left:0px;top:531px;width:1400px;height:1px;background:#909090;"></div>
<div class="ab" style="left:0px;top:513px;width:16px;height:18px;background:#bfd4eb;border-top:1px solid #fff;border-left:1px solid #fff"></div>
<div class="t b" style="left:20.0px;top:515px;font-size:12px;letter-spacing:.12px">TC from Pit in Acetyl<span style="letter-spacing:.45px">3</span></div>
<div class="t b" style="left:304.0px;top:515px;font-size:12px;letter-spacing:.12px">CPT</div>
<div class="t b" style="left:364px;top:515px;width:55.4px;text-align:right;font-size:12px;letter-spacing:.12px"><span style="letter-spacing:.45px">0.22</span></div>
<div class="t b" style="left:1306.9px;top:515px;font-size:12px;letter-spacing:.12px"><span style="letter-spacing:.7px">2</span><span style="letter-spacing:.7px">1</span><span style="padding:0 .6px">/</span><span style="letter-spacing:.7px">5</span><span style="padding:0 .6px">/</span><span style="letter-spacing:.7px">2</span><span style="letter-spacing:.7px">0</span><span style="letter-spacing:.7px">1</span><span style="letter-spacing:.7px">9</span></div>
<div class="ab" style="left:0px;top:550px;width:1400px;height:1px;background:#909090;"></div>
<div class="ab" style="left:0px;top:532px;width:16px;height:18px;background:#bfd4eb;border-top:1px solid #fff;border-left:1px solid #fff"></div>
<div class="t b" style="left:20.0px;top:534px;font-size:12px;letter-spacing:.12px">Test<span style="letter-spacing:.45px">1</span></div>
<div class="t b" style="left:304.0px;top:534px;font-size:12px;letter-spacing:.12px">CPT</div>
<div class="t b" style="left:364px;top:534px;width:55.4px;text-align:right;font-size:12px;letter-spacing:.12px"><span style="letter-spacing:.45px">3.54</span></div>
<div class="t b" style="left:1310.3px;top:534px;font-size:12px;letter-spacing:.12px"><span style="letter-spacing:.7px">3</span><span style="padding:0 .6px">/</span><span style="letter-spacing:.7px">7</span><span style="padding:0 .6px">/</span><span style="letter-spacing:.7px">2</span><span style="letter-spacing:.7px">0</span><span style="letter-spacing:.7px">1</span><span style="letter-spacing:.7px">9</span></div>
<div class="ab" style="left:0px;top:569px;width:1400px;height:1px;background:#909090;"></div>
<div class="ab" style="left:0px;top:551px;width:16px;height:18px;background:#bfd4eb;border-top:1px solid #fff;border-left:1px solid #fff"></div>
<div class="t b" style="left:20.0px;top:553px;font-size:12px;letter-spacing:.12px">Test<span style="letter-spacing:.45px">2</span></div>
<div class="t b" style="left:304.0px;top:553px;font-size:12px;letter-spacing:.12px">CPT</div>
<div class="t b" style="left:364px;top:553px;width:55.4px;text-align:right;font-size:12px;letter-spacing:.12px"><span style="letter-spacing:.45px">3.60</span></div>
<div class="t b" style="left:1310.3px;top:553px;font-size:12px;letter-spacing:.12px"><span style="letter-spacing:.7px">4</span><span style="padding:0 .6px">/</span><span style="letter-spacing:.7px">7</span><span style="padding:0 .6px">/</span><span style="letter-spacing:.7px">2</span><span style="letter-spacing:.7px">0</span><span style="letter-spacing:.7px">1</span><span style="letter-spacing:.7px">9</span></div>
<div class="ab" style="left:0px;top:588px;width:1400px;height:1px;background:#909090;"></div>
<div class="ab" style="left:0px;top:570px;width:16px;height:18px;background:#bfd4eb;border-top:1px solid #fff;border-left:1px solid #fff"></div>
<div class="t b" style="left:20.0px;top:572px;font-size:12px;letter-spacing:.12px">V<span style="letter-spacing:.45px">-</span>Beg <span style="letter-spacing:.45px">01</span></div>
<div class="t b" style="left:304.0px;top:572px;font-size:12px;letter-spacing:.12px">CPT</div>
<div class="t b" style="left:364px;top:572px;width:55.4px;text-align:right;font-size:12px;letter-spacing:.12px"><span style="letter-spacing:.45px">26.40</span></div>
<div class="ab" style="left:0px;top:607px;width:1400px;height:1px;background:#909090;"></div>
<div class="ab" style="left:0px;top:589px;width:16px;height:18px;background:#bfd4eb;border-top:1px solid #fff;border-left:1px solid #fff"></div>
<div class="t b" style="left:20.0px;top:591px;font-size:12px;letter-spacing:.12px">V<span style="letter-spacing:.45px">-</span>Beg <span style="letter-spacing:.45px">02</span></div>
<div class="t b" style="left:304.0px;top:591px;font-size:12px;letter-spacing:.12px">CPT</div>
<div class="t b" style="left:364px;top:591px;width:55.4px;text-align:right;font-size:12px;letter-spacing:.12px"><span style="letter-spacing:.45px">9.00</span></div>
<div class="t b" style="left:425.0px;top:591px;font-size:12px;letter-spacing:.12px">Place</div>
<div class="t b" style="left:729px;top:591px;width:79.4px;text-align:right;font-size:12px;letter-spacing:.12px"><span style="letter-spacing:.45px">262730.3</span></div>
<div class="t b" style="left:810px;top:591px;width:79.4px;text-align:right;font-size:12px;letter-spacing:.12px"><span style="letter-spacing:.45px">6265987.3</span></div>
<div class="t b" style="left:891px;top:591px;width:76.4px;text-align:right;font-size:12px;letter-spacing:.12px"><span style="letter-spacing:.45px">1.51</span></div>
<div class="t b" style="left:977.2px;top:591px;font-size:12px;letter-spacing:.12px"><span style="letter-spacing:.45px">0</span></div>
<div class="t b" style="left:1054.2px;top:591px;font-size:12px;letter-spacing:.12px"><span style="letter-spacing:.45px">0.001</span></div>
<div class="t b" style="left:1303.2px;top:591px;font-size:12px;letter-spacing:.12px"><span style="letter-spacing:.7px">2</span><span style="letter-spacing:.7px">3</span><span style="padding:0 .6px">/</span><span style="letter-spacing:.7px">1</span><span style="letter-spacing:.7px">2</span><span style="padding:0 .6px">/</span><span style="letter-spacing:.7px">2</span><span style="letter-spacing:.7px">0</span><span style="letter-spacing:.7px">1</span><span style="letter-spacing:.7px">9</span></div>
<div class="ab" style="left:0px;top:626px;width:1400px;height:1px;background:#909090;"></div>
<div class="ab" style="left:0px;top:608px;width:16px;height:18px;background:#bfd4eb;border-top:1px solid #fff;border-left:1px solid #fff"></div>
<div class="t b" style="left:20.0px;top:610px;font-size:12px;letter-spacing:.12px">V<span style="letter-spacing:.45px">-</span>BPT</div>
<div class="t b" style="left:364px;top:610px;width:55.4px;text-align:right;font-size:12px;letter-spacing:.12px"><span style="letter-spacing:.45px">8.56</span></div>
<div class="ab" style="left:0px;top:645px;width:1400px;height:1px;background:#909090;"></div>
<div class="ab" style="left:0px;top:627px;width:16px;height:18px;background:#bfd4eb;border-top:1px solid #fff;border-left:1px solid #fff"></div>
<div class="t b" style="left:20.0px;top:629px;font-size:12px;letter-spacing:.12px">V<span style="letter-spacing:.45px">-</span>CPT FT</div>
<div class="t b" style="left:304.0px;top:629px;font-size:12px;letter-spacing:.12px">CPT</div>
<div class="t b" style="left:364px;top:629px;width:55.4px;text-align:right;font-size:12px;letter-spacing:.12px"><span style="letter-spacing:.45px">11.94</span></div>
<div class="t b" style="left:425.0px;top:629px;font-size:12px;letter-spacing:.12px">Place</div>
<div class="t b" style="left:729px;top:629px;width:79.4px;text-align:right;font-size:12px;letter-spacing:.12px"><span style="letter-spacing:.45px">262947.6</span></div>
<div class="t b" style="left:810px;top:629px;width:79.4px;text-align:right;font-size:12px;letter-spacing:.12px"><span style="letter-spacing:.45px">6266091.6</span></div>
<div class="t b" style="left:891px;top:629px;width:76.4px;text-align:right;font-size:12px;letter-spacing:.12px"><span style="letter-spacing:.45px">1.51</span></div>
<div class="t b" style="left:977.2px;top:629px;font-size:12px;letter-spacing:.12px"><span style="letter-spacing:.45px">0</span></div>
<div class="t b" style="left:1054.2px;top:629px;font-size:12px;letter-spacing:.12px"><span style="letter-spacing:.45px">0.001</span></div>
<div class="t b" style="left:1303.2px;top:629px;font-size:12px;letter-spacing:.12px"><span style="letter-spacing:.7px">2</span><span style="letter-spacing:.7px">3</span><span style="padding:0 .6px">/</span><span style="letter-spacing:.7px">1</span><span style="letter-spacing:.7px">2</span><span style="padding:0 .6px">/</span><span style="letter-spacing:.7px">2</span><span style="letter-spacing:.7px">0</span><span style="letter-spacing:.7px">1</span><span style="letter-spacing:.7px">9</span></div>
<div class="ab" style="left:0px;top:664px;width:1400px;height:1px;background:#909090;"></div>
<div class="ab" style="left:0px;top:646px;width:16px;height:18px;background:#bfd4eb;border-top:1px solid #fff;border-left:1px solid #fff"></div>
<div class="t b" style="left:20.0px;top:648px;font-size:12px;letter-spacing:.12px">V<span style="letter-spacing:.45px">-</span>Diss OC Type III</div>
<div class="t b" style="left:304.0px;top:648px;font-size:12px;letter-spacing:.12px">CPT</div>
<div class="t b" style="left:364px;top:648px;width:55.4px;text-align:right;font-size:12px;letter-spacing:.12px"><span style="letter-spacing:.45px">0.12</span></div>
<div class="t b" style="left:425.0px;top:648px;font-size:12px;letter-spacing:.12px">Place</div>
<div class="t b" style="left:891px;top:648px;width:76.4px;text-align:right;font-size:12px;letter-spacing:.12px"><span style="letter-spacing:.45px">1.00</span></div>
<div class="ab" style="left:0px;top:683px;width:1400px;height:1px;background:#909090;"></div>
<div class="ab" style="left:0px;top:665px;width:16px;height:18px;background:#bfd4eb;border-top:1px solid #fff;border-left:1px solid #fff"></div>
<div class="t b" style="left:20.0px;top:667px;font-size:12px;letter-spacing:.12px">V<span style="letter-spacing:.45px">-</span>Diss OC Type V</div>
<div class="t b" style="left:304.0px;top:667px;font-size:12px;letter-spacing:.12px">CPT</div>
<div class="t b" style="left:364px;top:667px;width:55.4px;text-align:right;font-size:12px;letter-spacing:.12px"><span style="letter-spacing:.45px">8.56</span></div>
<div class="t b" style="left:891px;top:667px;width:76.4px;text-align:right;font-size:12px;letter-spacing:.12px"><span style="letter-spacing:.45px">0.00</span></div>
<div class="t b" style="left:977.2px;top:667px;font-size:12px;letter-spacing:.12px"><span style="letter-spacing:.45px">1</span></div>
<div class="t b" style="left:1054.2px;top:667px;font-size:12px;letter-spacing:.12px"><span style="letter-spacing:.45px">0.001</span></div>
<div class="t b" style="left:1306.9px;top:667px;font-size:12px;letter-spacing:.12px"><span style="letter-spacing:.7px">5</span><span style="padding:0 .6px">/</span><span style="letter-spacing:.7px">1</span><span style="letter-spacing:.7px">0</span><span style="padding:0 .6px">/</span><span style="letter-spacing:.7px">2</span><span style="letter-spacing:.7px">0</span><span style="letter-spacing:.7px">1</span><span style="letter-spacing:.7px">9</span></div>
<div class="ab" style="left:0px;top:702px;width:1400px;height:1px;background:#909090;"></div>
<div class="ab" style="left:0px;top:684px;width:16px;height:18px;background:#bfd4eb;border-top:1px solid #fff;border-left:1px solid #fff"></div>
<div class="t b" style="left:20.0px;top:686px;font-size:12px;letter-spacing:.12px">V<span style="letter-spacing:.45px">-</span>Diss Test Multi</div>
<div class="t b" style="left:304.0px;top:686px;font-size:12px;letter-spacing:.12px">CPT</div>
<div class="t b" style="left:364px;top:686px;width:55.4px;text-align:right;font-size:12px;letter-spacing:.12px"><span style="letter-spacing:.45px">20.17</span></div>
<div class="t b" style="left:425.0px;top:686px;font-size:12px;letter-spacing:.12px">Place</div>
<div class="t b" style="left:729px;top:686px;width:79.4px;text-align:right;font-size:12px;letter-spacing:.12px"><span style="letter-spacing:.45px">262014.5</span></div>
<div class="t b" style="left:810px;top:686px;width:79.4px;text-align:right;font-size:12px;letter-spacing:.12px"><span style="letter-spacing:.45px">6266120.2</span></div>
<div class="t b" style="left:891px;top:686px;width:76.4px;text-align:right;font-size:12px;letter-spacing:.12px"><span style="letter-spacing:.45px">3.10</span></div>
<div class="t b" style="left:1303.2px;top:686px;font-size:12px;letter-spacing:.12px"><span style="letter-spacing:.7px">1</span><span style="letter-spacing:.7px">0</span><span style="padding:0 .6px">/</span><span style="letter-spacing:.7px">5</span><span style="padding:0 .6px">/</span><span style="letter-spacing:.7px">2</span><span style="letter-spacing:.7px">0</span><span style="letter-spacing:.7px">1</span><span style="letter-spacing:.7px">9</span></div>
<div class="ab" style="left:363px;top:264px;width:61px;height:22px;background:transparent;border:3px solid #ff3b3b"></div>
</div>
<div class="ab" style="left:1571px;top:139px;width:17px;height:691px;background:#f0f0f0"></div>
<div class="ab" style="left:1572px;top:363px;width:15px;height:246px;background:#cdcdcd"></div>
<svg class="ab" style="left:1571px;top:139px" width="17" height="691"><path d="M5 12 L8.5 8.5 L12 12" stroke="#606060" stroke-width="1.6" fill="none"/><path d="M5 681 L8.5 684.5 L12 681" stroke="#606060" stroke-width="1.6" fill="none"/></svg>
<div class="ab" style="left:220px;top:830px;width:1368px;height:17px;background:#f0f0f0"></div>
<div class="ab" style="left:237px;top:831px;width:288px;height:15px;background:#cdcdcd"></div>
<svg class="ab" style="left:220px;top:830px" width="1368" height="17"><path d="M11 5 L7.5 8.5 L11 12" stroke="#606060" stroke-width="1.6" fill="none"/><path d="M1341 5 L1344.5 8.5 L1341 12" stroke="#606060" stroke-width="1.6" fill="none"/></svg>
<div class="ab" style="left:218px;top:855px;width:1307px;height:39px;background:#b8fef6;border-top:1px solid #a0a0a0;border-left:1px solid #a0a0a0;border-right:1px solid #fff;border-bottom:1px solid #fff;box-shadow:inset 1px 1px 0 #696969,inset -1px -1px 0 #e3e3e3"></div>
<div class="ab" style="left:1506px;top:857px;width:17px;height:35px;background:#f0f0f0"></div>
<svg class="ab" style="left:1506px;top:857px" width="17" height="35"><path d="M5 12 L8.5 8.5 L12 12" stroke="#c0c0c0" stroke-width="1.6" fill="none"/><path d="M5 25 L8.5 28.5 L12 25" stroke="#c0c0c0" stroke-width="1.6" fill="none"/></svg>
<div class="t" style="left:227px;top:860px;font-size:10.7px;letter-spacing:-.04px">Exploratory hole or location equivalent</div>
<div class="ab" style="left:1529px;top:855px;width:61px;height:39px;background:#bfd4eb;border-top:1px solid #a0a0a0;border-left:1px solid #a0a0a0;border-right:1px solid #fff;border-bottom:1px solid #fff;box-shadow:inset 1px 1px 0 #696969,inset -1px -1px 0 #e3e3e3"></div>
<div class="t" style="left:1529px;top:858px;width:61px;text-align:center;font-size:11px;line-height:13px">Row 40<br>of 88</div>
<svg class="ab" style="left:140px;top:390px" width="80" height="50" viewBox="140 390 80 50"><defs><filter id="sh" x="-30%" y="-30%" width="160%" height="170%"><feGaussianBlur in="SourceAlpha" stdDeviation="1.8"/><feOffset dx="1.5" dy="3.5" result="o"/><feFlood flood-color="#000" flood-opacity="0.45"/><feComposite in2="o" operator="in"/><feMerge><feMergeNode/><feMergeNode in="SourceGraphic"/></feMerge></filter></defs><path d="M154.5 409 H184.3 V399 L213.5 414 L184.3 429 V419 H154.5 A5 5 0 0 1 154.5 409 Z" fill="#ff4040" filter="url(#sh)"/></svg>
<svg class="ab" style="left:686px;top:17px" width="14" height="22" viewBox="0 0 14 22"><path d="M0.5 0.5 V16.5 L4.5 12.8 L7.3 18.8 L9.5 17.8 L6.8 11.8 H11.8 Z" fill="#fff" stroke="#000" stroke-width="1" stroke-linejoin="round"/></svg>
</body></html>
